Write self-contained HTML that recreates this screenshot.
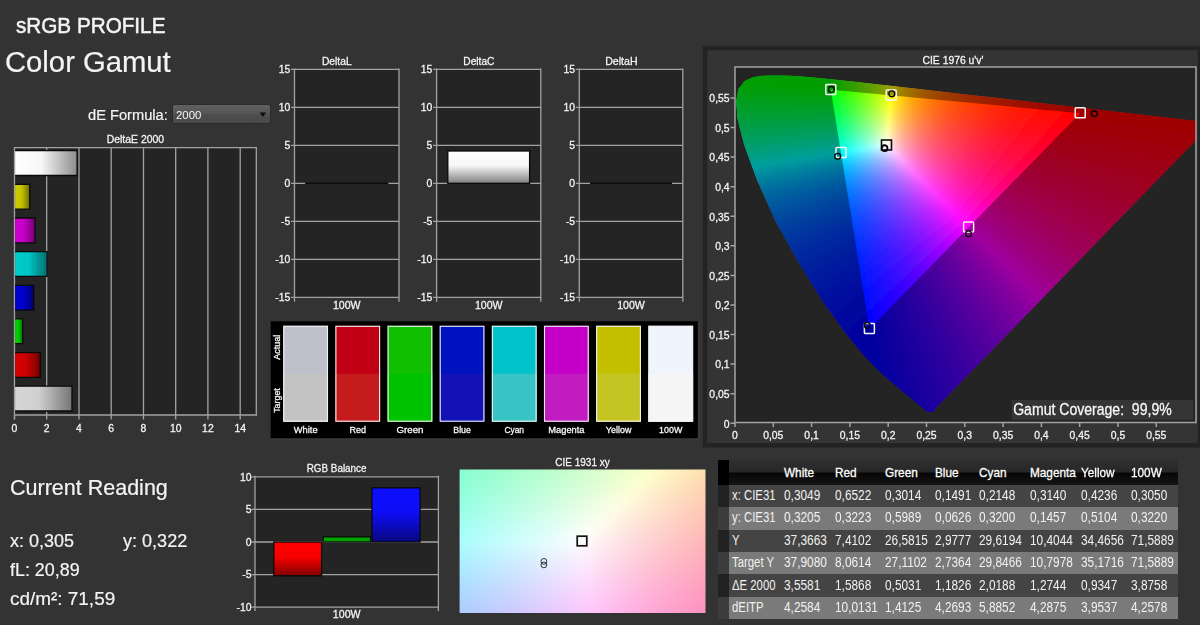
<!DOCTYPE html>
<html lang="en"><head><meta charset="utf-8"><title>sRGB PROFILE - Color Gamut</title>
<style>
*{box-sizing:border-box}
html,body{margin:0;padding:0;background:#333}
body{width:1200px;height:625px;overflow:hidden;position:relative;color:#f4f4f4;font-family:"Liberation Sans",sans-serif}
section,header{position:absolute;margin:0}
svg{position:absolute;left:0;top:0;overflow:visible}
svg text{font-family:"Liberation Sans",sans-serif;stroke:#f4f4f4;stroke-width:.28px;opacity:.999}
h1,h2,h3,p,table,.sx{opacity:.999}
.sx{display:inline-block;transform-origin:0 50%;white-space:nowrap}
h1,h2,h3,p{margin:0;font-weight:normal;position:absolute;white-space:nowrap;line-height:1}
#tbl{position:absolute;left:718.4px;top:459.8px;width:459.8px;border-collapse:collapse;table-layout:fixed;font-size:14.2px;color:#f2f2f2}
#tbl td,#tbl th{padding:0;height:22.4px;line-height:22.4px;text-align:left;font-weight:normal;white-space:nowrap;overflow:visible}
#tbl th{height:23.8px;line-height:25px;color:#fff}
#tbl thead tr{background:linear-gradient(#313131,#272727 49%,#070707 51%,#151515)}
#tbl th span{-webkit-text-stroke:.3px #fff}
#tbl th:first-child{background:#000}
#tbl td:first-child{background:rgba(0,0,0,.5)}
#tbl tbody tr:nth-child(odd){background:#454545}
#tbl tbody tr:nth-child(even){background:#7b7b7b}
#tbl .h0{background:linear-gradient(#000,#000 12%,rgba(0,0,0,.55) 40%,rgba(0,0,0,.25))}
#tbl span{display:inline-block;transform:scaleX(.835);transform-origin:0 50%;position:relative;top:-.8px}
#tbl td.l span{transform:scaleX(.80)}
#tbl th span{transform:scaleX(.92);font-size:12.8px;top:.3px}
</style></head><body>
<header style="left:0;top:0;width:280px;height:130px">
<h1 id="t1" style="left:15.6px;top:14.5px;font-size:21.8px;-webkit-text-stroke:.5px #f4f4f4"><span class="sx" style="transform:scaleX(.949)">sRGB PROFILE</span></h1>
<h2 id="t2" style="-webkit-text-stroke:.2px #f4f4f4;left:5.2px;top:45.5px;font-size:30.4px"><span class="sx" style="transform:scaleX(.962)">Color Gamut</span></h2>
</header>
<section style="left:80px;top:100px;width:195px;height:30px">
<p id="t3" style="-webkit-text-stroke:.2px #f4f4f4;left:8.2px;top:7px;font-size:15.5px"><span class="sx" style="transform:scaleX(.945)">dE Formula:</span></p>
<div style="position:absolute;left:92.8px;top:5.2px;width:96.8px;height:17.6px;border-radius:1.5px;background:linear-gradient(#616161,#565656 45%,#4d4d4d 55%,#494949);box-shadow:0 0 0 1px #2c2c2c"><span class="sx" id="t4" style="position:absolute;left:3.2px;top:4.8px;font-size:11.8px;line-height:1;transform:scaleX(.97)">2000</span><svg width="97" height="18"><path d="M86.6 7.6h6.6l-3.3 4.2z" fill="#0a0a0a"/></svg></div>
</section>
<svg width="0" height="0" style="position:absolute"><defs>
<linearGradient id="hw100" x1="0" x2="1" y1="0" y2="0"><stop offset="0" stop-color="rgb(255,255,255)"/><stop offset=".42" stop-color="rgb(247,247,247)"/><stop offset="1" stop-color="rgb(140,140,140)"/></linearGradient>
<linearGradient id="hyel" x1="0" x2="1" y1="0" y2="0"><stop offset="0" stop-color="rgb(204,204,0)"/><stop offset=".42" stop-color="rgb(197,197,0)"/><stop offset="1" stop-color="rgb(112,112,0)"/></linearGradient>
<linearGradient id="hmag" x1="0" x2="1" y1="0" y2="0"><stop offset="0" stop-color="rgb(204,0,204)"/><stop offset=".42" stop-color="rgb(197,0,197)"/><stop offset="1" stop-color="rgb(112,0,112)"/></linearGradient>
<linearGradient id="hcya" x1="0" x2="1" y1="0" y2="0"><stop offset="0" stop-color="rgb(0,204,204)"/><stop offset=".42" stop-color="rgb(0,197,197)"/><stop offset="1" stop-color="rgb(0,112,112)"/></linearGradient>
<linearGradient id="hblu" x1="0" x2="1" y1="0" y2="0"><stop offset="0" stop-color="rgb(0,0,210)"/><stop offset=".42" stop-color="rgb(0,0,203)"/><stop offset="1" stop-color="rgb(0,0,115)"/></linearGradient>
<linearGradient id="hgrn" x1="0" x2="1" y1="0" y2="0"><stop offset="0" stop-color="rgb(0,210,0)"/><stop offset=".42" stop-color="rgb(0,203,0)"/><stop offset="1" stop-color="rgb(0,115,0)"/></linearGradient>
<linearGradient id="hred" x1="0" x2="1" y1="0" y2="0"><stop offset="0" stop-color="rgb(214,0,0)"/><stop offset=".42" stop-color="rgb(207,0,0)"/><stop offset="1" stop-color="rgb(117,0,0)"/></linearGradient>
<linearGradient id="hwht" x1="0" x2="1" y1="0" y2="0"><stop offset="0" stop-color="rgb(214,214,214)"/><stop offset=".42" stop-color="rgb(207,207,207)"/><stop offset="1" stop-color="rgb(117,117,117)"/></linearGradient>
<linearGradient id="vw" x1="0" x2="0" y1="0" y2="1"><stop offset="0" stop-color="rgb(255,255,255)"/><stop offset=".45" stop-color="rgb(247,247,247)"/><stop offset="1" stop-color="rgb(127,127,127)"/></linearGradient>
<linearGradient id="vr" x1="0" x2="0" y1="0" y2="1"><stop offset="0" stop-color="rgb(255,0,0)"/><stop offset=".45" stop-color="rgb(247,0,0)"/><stop offset="1" stop-color="rgb(127,0,0)"/></linearGradient>
<linearGradient id="vg" x1="0" x2="0" y1="0" y2="1"><stop offset="0" stop-color="rgb(0,200,0)"/><stop offset=".45" stop-color="rgb(0,194,0)"/><stop offset="1" stop-color="rgb(0,100,0)"/></linearGradient>
<linearGradient id="vb" x1="0" x2="0" y1="0" y2="1"><stop offset="0" stop-color="rgb(14,14,255)"/><stop offset=".45" stop-color="rgb(13,13,247)"/><stop offset="1" stop-color="rgb(7,7,127)"/></linearGradient>
</defs></svg>
<section style="left:0px;top:130px;width:270px;height:315px">
<svg width="270" height="315" viewBox="0 130 270 315">
<rect x="14.5" y="147.7" width="241.8" height="267.3" fill="#242424"/>
<path d="M46.7 147.7V415.0M79.0 147.7V415.0M111.2 147.7V415.0M143.5 147.7V415.0M175.7 147.7V415.0M207.9 147.7V415.0M240.2 147.7V415.0" stroke="#a2a2a2" stroke-width="1.3" fill="none"/>
<path d="M14.5 419.5V147.7H256.3V415.0M13.8 415.0H257.0" stroke="#a2a2a2" stroke-width="1.3" fill="none"/>
<path d="M14.5 415.0v4.5M46.7 415.0v4.5M79.0 415.0v4.5M111.2 415.0v4.5M143.5 415.0v4.5M175.7 415.0v4.5M207.9 415.0v4.5M240.2 415.0v4.5" stroke="#a2a2a2" stroke-width="1.3" fill="none"/>
<rect x="15.1" y="150.7" width="62.0" height="24.8" fill="url(#hw100)"/><path d="M15.1 150.7H77.1v24.8H15.1" fill="none" stroke="#0a0a0a" stroke-width="1.3"/>
<rect x="15.1" y="184.3" width="14.6" height="24.8" fill="url(#hyel)"/><path d="M15.1 184.3H29.7v24.8H15.1" fill="none" stroke="#0a0a0a" stroke-width="1.3"/>
<rect x="15.1" y="218.0" width="20.0" height="24.8" fill="url(#hmag)"/><path d="M15.1 218.0H35.1v24.8H15.1" fill="none" stroke="#0a0a0a" stroke-width="1.3"/>
<rect x="15.1" y="251.6" width="32.0" height="24.8" fill="url(#hcya)"/><path d="M15.1 251.6H47.1v24.8H15.1" fill="none" stroke="#0a0a0a" stroke-width="1.3"/>
<rect x="15.1" y="285.3" width="18.6" height="24.8" fill="url(#hblu)"/><path d="M15.1 285.3H33.7v24.8H15.1" fill="none" stroke="#0a0a0a" stroke-width="1.3"/>
<rect x="15.1" y="318.9" width="7.6" height="24.8" fill="url(#hgrn)"/><path d="M15.1 318.9H22.7v24.8H15.1" fill="none" stroke="#0a0a0a" stroke-width="1.3"/>
<rect x="15.1" y="352.6" width="25.1" height="24.8" fill="url(#hred)"/><path d="M15.1 352.6H40.2v24.8H15.1" fill="none" stroke="#0a0a0a" stroke-width="1.3"/>
<rect x="15.1" y="386.2" width="56.9" height="24.8" fill="url(#hwht)"/><path d="M15.1 386.2H72.0v24.8H15.1" fill="none" stroke="#0a0a0a" stroke-width="1.3"/>
<g font-size="10.8">
<text x="14.5" y="431.8" font-size="10.4" text-anchor="middle" fill="#f4f4f4">0</text>
<text x="46.7" y="431.8" font-size="10.4" text-anchor="middle" fill="#f4f4f4">2</text>
<text x="79.0" y="431.8" font-size="10.4" text-anchor="middle" fill="#f4f4f4">4</text>
<text x="111.2" y="431.8" font-size="10.4" text-anchor="middle" fill="#f4f4f4">6</text>
<text x="143.5" y="431.8" font-size="10.4" text-anchor="middle" fill="#f4f4f4">8</text>
<text x="175.7" y="431.8" font-size="10.4" text-anchor="middle" fill="#f4f4f4">10</text>
<text x="207.9" y="431.8" font-size="10.4" text-anchor="middle" fill="#f4f4f4">12</text>
<text x="240.2" y="431.8" font-size="10.4" text-anchor="middle" fill="#f4f4f4">14</text>
</g>
<text x="135.4" y="143.3" font-size="10.8" text-anchor="middle" fill="#f4f4f4" textLength="57.5" lengthAdjust="spacingAndGlyphs">DeltaE 2000</text>
</svg></section>
<section style="left:268px;top:52px;width:138px;height:262px">
<svg width="138" height="262" viewBox="268 52 138 262">
<rect x="294.5" y="69.3" width="104.5" height="228.0" fill="#242424"/>
<path d="M291.0 107.3H399.0M291.0 145.3H399.0M291.0 221.3H399.0M291.0 259.3H399.0M291.0 183.3H305.3M388.2 183.3H399.0M291.0 69.3H399.0M291.0 297.3H399.0" stroke="#a2a2a2" stroke-width="1.3" fill="none"/>
<path d="M294.5 68.6V301.8M399.0 68.6V301.8" stroke="#a2a2a2" stroke-width="1.3" fill="none"/>
<path d="M305.3 183.3H388.2" stroke="#0c0c0c" stroke-width="1.6"/>
<text x="290.3" y="73.0" font-size="10.4" text-anchor="end" fill="#f4f4f4">15</text>
<text x="290.3" y="111.0" font-size="10.4" text-anchor="end" fill="#f4f4f4">10</text>
<text x="290.3" y="149.0" font-size="10.4" text-anchor="end" fill="#f4f4f4">5</text>
<text x="290.3" y="187.0" font-size="10.4" text-anchor="end" fill="#f4f4f4">0</text>
<text x="290.3" y="225.0" font-size="10.4" text-anchor="end" fill="#f4f4f4">-5</text>
<text x="290.3" y="263.0" font-size="10.4" text-anchor="end" fill="#f4f4f4">-10</text>
<text x="290.3" y="301.0" font-size="10.4" text-anchor="end" fill="#f4f4f4">-15</text>
<text x="346.8" y="308.8" font-size="10.8" text-anchor="middle" fill="#f4f4f4" textLength="27.6" lengthAdjust="spacingAndGlyphs">100W</text>
<text x="336.8" y="64.9" font-size="10.8" text-anchor="middle" fill="#f4f4f4" textLength="29.8" lengthAdjust="spacingAndGlyphs">DeltaL</text>
</svg></section>
<section style="left:410px;top:52px;width:138px;height:262px">
<svg width="138" height="262" viewBox="410 52 138 262">
<rect x="436.6" y="69.3" width="104.2" height="228.0" fill="#242424"/>
<path d="M433.1 107.3H540.8M433.1 145.3H540.8M433.1 221.3H540.8M433.1 259.3H540.8M433.1 183.3H447.40000000000003M530.0 183.3H540.8M433.1 69.3H540.8M433.1 297.3H540.8" stroke="#a2a2a2" stroke-width="1.3" fill="none"/>
<path d="M436.6 68.6V301.8M540.8 68.6V301.8" stroke="#a2a2a2" stroke-width="1.3" fill="none"/>
<rect x="447.8" y="151.0" width="81.8" height="32.3" fill="url(#vw)" stroke="#0a0a0a" stroke-width="1.3"/>
<text x="432.4" y="73.0" font-size="10.4" text-anchor="end" fill="#f4f4f4">15</text>
<text x="432.4" y="111.0" font-size="10.4" text-anchor="end" fill="#f4f4f4">10</text>
<text x="432.4" y="149.0" font-size="10.4" text-anchor="end" fill="#f4f4f4">5</text>
<text x="432.4" y="187.0" font-size="10.4" text-anchor="end" fill="#f4f4f4">0</text>
<text x="432.4" y="225.0" font-size="10.4" text-anchor="end" fill="#f4f4f4">-5</text>
<text x="432.4" y="263.0" font-size="10.4" text-anchor="end" fill="#f4f4f4">-10</text>
<text x="432.4" y="301.0" font-size="10.4" text-anchor="end" fill="#f4f4f4">-15</text>
<text x="488.7" y="308.8" font-size="10.8" text-anchor="middle" fill="#f4f4f4" textLength="27.6" lengthAdjust="spacingAndGlyphs">100W</text>
<text x="478.9" y="64.9" font-size="10.8" text-anchor="middle" fill="#f4f4f4" textLength="31.2" lengthAdjust="spacingAndGlyphs">DeltaC</text>
</svg></section>
<section style="left:553px;top:52px;width:137px;height:262px">
<svg width="137" height="262" viewBox="553 52 137 262">
<rect x="579.3" y="69.3" width="103.5" height="228.0" fill="#242424"/>
<path d="M575.8 107.3H682.8M575.8 145.3H682.8M575.8 221.3H682.8M575.8 259.3H682.8M575.8 183.3H590.0999999999999M672.0 183.3H682.8M575.8 69.3H682.8M575.8 297.3H682.8" stroke="#a2a2a2" stroke-width="1.3" fill="none"/>
<path d="M579.3 68.6V301.8M682.8 68.6V301.8" stroke="#a2a2a2" stroke-width="1.3" fill="none"/>
<path d="M590.0999999999999 183.3H672.0" stroke="#0c0c0c" stroke-width="1.6"/>
<text x="575.1" y="73.0" font-size="10.4" text-anchor="end" fill="#f4f4f4">15</text>
<text x="575.1" y="111.0" font-size="10.4" text-anchor="end" fill="#f4f4f4">10</text>
<text x="575.1" y="149.0" font-size="10.4" text-anchor="end" fill="#f4f4f4">5</text>
<text x="575.1" y="187.0" font-size="10.4" text-anchor="end" fill="#f4f4f4">0</text>
<text x="575.1" y="225.0" font-size="10.4" text-anchor="end" fill="#f4f4f4">-5</text>
<text x="575.1" y="263.0" font-size="10.4" text-anchor="end" fill="#f4f4f4">-10</text>
<text x="575.1" y="301.0" font-size="10.4" text-anchor="end" fill="#f4f4f4">-15</text>
<text x="631.0" y="308.8" font-size="10.8" text-anchor="middle" fill="#f4f4f4" textLength="27.6" lengthAdjust="spacingAndGlyphs">100W</text>
<text x="621.4" y="64.9" font-size="10.8" text-anchor="middle" fill="#f4f4f4" textLength="32.4" lengthAdjust="spacingAndGlyphs">DeltaH</text>
</svg></section>
<section style="left:270px;top:320px;width:432px;height:120px">
<svg width="432" height="120" viewBox="270 320 432 120">
<rect x="272" y="323" width="428" height="117.6" fill="#383838"/>
<rect x="270.7" y="321.3" width="427.1" height="116.9" fill="#000"/>
<rect x="283.3" y="325.8" width="44.7" height="95.9" fill="#bec1cb"/>
<rect x="283.3" y="373.7" width="44.7" height="48" fill="#c3c3c3"/>
<rect x="283.8" y="326.3" width="43.7" height="94.9" fill="none" stroke="#f2f2f2" stroke-width="1.1"/>
<text x="305.7" y="432.6" font-size="9.6" text-anchor="middle" fill="#fff" textLength="23.8" lengthAdjust="spacingAndGlyphs" stroke="#fff" stroke-width=".3">White</text>
<rect x="335.4" y="325.8" width="44.7" height="95.9" fill="#c10016"/>
<rect x="335.4" y="373.7" width="44.7" height="48" fill="#c41c1c"/>
<rect x="335.9" y="326.3" width="43.7" height="94.9" fill="none" stroke="#f2f2f2" stroke-width="1.1"/>
<text x="357.8" y="432.6" font-size="9.6" text-anchor="middle" fill="#fff" textLength="16.5" lengthAdjust="spacingAndGlyphs" stroke="#fff" stroke-width=".3">Red</text>
<rect x="387.6" y="325.8" width="44.7" height="95.9" fill="#10c000"/>
<rect x="387.6" y="373.7" width="44.7" height="48" fill="#00c300"/>
<rect x="388.1" y="326.3" width="43.7" height="94.9" fill="none" stroke="#f2f2f2" stroke-width="1.1"/>
<text x="410.0" y="432.6" font-size="9.6" text-anchor="middle" fill="#fff" textLength="27.0" lengthAdjust="spacingAndGlyphs" stroke="#fff" stroke-width=".3">Green</text>
<rect x="439.8" y="325.8" width="44.7" height="95.9" fill="#0012c0"/>
<rect x="439.8" y="373.7" width="44.7" height="48" fill="#1212b6"/>
<rect x="440.2" y="326.3" width="43.7" height="94.9" fill="none" stroke="#f2f2f2" stroke-width="1.1"/>
<text x="462.1" y="432.6" font-size="9.6" text-anchor="middle" fill="#fff" textLength="17.6" lengthAdjust="spacingAndGlyphs" stroke="#fff" stroke-width=".3">Blue</text>
<rect x="491.9" y="325.8" width="44.7" height="95.9" fill="#00c2ca"/>
<rect x="491.9" y="373.7" width="44.7" height="48" fill="#38c4c4"/>
<rect x="492.4" y="326.3" width="43.7" height="94.9" fill="none" stroke="#f2f2f2" stroke-width="1.1"/>
<text x="514.2" y="432.6" font-size="9.6" text-anchor="middle" fill="#fff" textLength="19.6" lengthAdjust="spacingAndGlyphs" stroke="#fff" stroke-width=".3">Cyan</text>
<rect x="544.0" y="325.8" width="44.7" height="95.9" fill="#c400c8"/>
<rect x="544.0" y="373.7" width="44.7" height="48" fill="#c21cc0"/>
<rect x="544.5" y="326.3" width="43.7" height="94.9" fill="none" stroke="#f2f2f2" stroke-width="1.1"/>
<text x="566.4" y="432.6" font-size="9.6" text-anchor="middle" fill="#fff" textLength="36.2" lengthAdjust="spacingAndGlyphs" stroke="#fff" stroke-width=".3">Magenta</text>
<rect x="596.2" y="325.8" width="44.7" height="95.9" fill="#c4c000"/>
<rect x="596.2" y="373.7" width="44.7" height="48" fill="#c4c422"/>
<rect x="596.7" y="326.3" width="43.7" height="94.9" fill="none" stroke="#f2f2f2" stroke-width="1.1"/>
<text x="618.6" y="432.6" font-size="9.6" text-anchor="middle" fill="#fff" textLength="25.5" lengthAdjust="spacingAndGlyphs" stroke="#fff" stroke-width=".3">Yellow</text>
<rect x="648.4" y="325.8" width="44.7" height="95.9" fill="#eff4fd"/>
<rect x="648.4" y="373.7" width="44.7" height="48" fill="#f5f5f5"/>
<rect x="648.9" y="326.3" width="43.7" height="94.9" fill="none" stroke="#f2f2f2" stroke-width="1.1"/>
<text x="670.7" y="432.6" font-size="9.6" text-anchor="middle" fill="#fff" textLength="23.2" lengthAdjust="spacingAndGlyphs" stroke="#fff" stroke-width=".3">100W</text>
<text transform="translate(280.4 359.7) rotate(-90)" font-size="9.6" fill="#fff" stroke="#fff" stroke-width=".3" textLength="25" lengthAdjust="spacingAndGlyphs">Actual</text>
<text transform="translate(280.4 412.8) rotate(-90)" font-size="9.6" fill="#fff" stroke="#fff" stroke-width=".3" textLength="24.6" lengthAdjust="spacingAndGlyphs">Target</text>
</svg></section>
<section style="left:702px;top:46px;width:498px;height:402px">
<svg width="498" height="402" viewBox="702 46 498 402">
<defs>
<clipPath id="cpPlot"><rect x="735.0" y="67.0" width="461.0" height="355.4"/></clipPath>
<clipPath id="cpLocus"><path d="M923.5 408.8L919.7 405.8L914.8 401.6L908.6 396.4L900.5 389.7L890.7 381.5L878.7 370.7L864.4 356.1L845.4 333.0L822.8 301.4L798.4 262.1L774.9 219.7L756.6 178.9L744.1 144.5L737.6 119.0L736.1 101.2L738.5 89.0L744.4 81.2L752.7 77.3L762.6 75.8L773.4 75.4L784.3 75.6L795.7 76.1L808.0 77.0L821.3 78.2L836.0 79.7L852.3 81.4L870.3 83.4L890.2 85.7L912.1 88.2L936.0 91.0L961.7 93.9L988.9 97.1L1017.0 100.3L1044.1 103.5L1070.5 106.5L1094.4 109.2L1115.5 111.7L1133.5 113.7L1148.6 115.5L1161.3 116.9L1172.3 118.2L1181.6 119.3L1189.2 120.2L1195.0 120.8L1199.5 121.4L1202.9 121.7L1205.1 122.0L1207.0 122.2L1208.4 122.4L1209.9 122.6L1211.2 122.7L1211.9 122.8L1212.3 122.8L1212.5 122.9L935.6 408.3Q931.4 416.1 923.5 408.8Z"/></clipPath>
<filter id="fb" x="-2%" y="-2%" width="104%" height="104%"><feGaussianBlur stdDeviation="1.7 1.6"/></filter>
<linearGradient id="r0" gradientUnits="userSpaceOnUse" x1="749" x2="817" y1="0" y2="0"><stop offset="0" stop-color="#00ff00"/><stop offset=".5" stop-color="#00ff00"/><stop offset="1" stop-color="#00ff00"/></linearGradient>
<linearGradient id="r1" gradientUnits="userSpaceOnUse" x1="742" x2="847" y1="0" y2="0"><stop offset="0" stop-color="#00ff00"/><stop offset=".4133" stop-color="#00ff00"/><stop offset=".8267" stop-color="#00ff00"/><stop offset="1" stop-color="#3cff00"/></linearGradient>
<linearGradient id="r2" gradientUnits="userSpaceOnUse" x1="739" x2="874" y1="0" y2="0"><stop offset="0" stop-color="#00ff00"/><stop offset=".3341" stop-color="#00ff00"/><stop offset=".6689" stop-color="#00ff00"/><stop offset=".7511" stop-color="#24ff00"/><stop offset=".8341" stop-color="#4cff00"/><stop offset=".917" stop-color="#77ff00"/><stop offset="1" stop-color="#a6ff00"/></linearGradient>
<linearGradient id="r3" gradientUnits="userSpaceOnUse" x1="737" x2="901" y1="0" y2="0"><stop offset="0" stop-color="#00ff06"/><stop offset=".1646" stop-color="#00ff00"/><stop offset=".3652" stop-color="#00ff00"/><stop offset=".5652" stop-color="#00ff00"/><stop offset=".661" stop-color="#34ff00"/><stop offset=".7561" stop-color="#6fff00"/><stop offset=".8518" stop-color="#b2ff00"/><stop offset=".8994" stop-color="#d7ff00"/><stop offset=".947" stop-color="#ffff00"/><stop offset=".9738" stop-color="#ffea00"/><stop offset="1" stop-color="#ffd700"/></linearGradient>
<linearGradient id="r4" gradientUnits="userSpaceOnUse" x1="735" x2="927" y1="0" y2="0"><stop offset="0" stop-color="#00ff0d"/><stop offset=".1589" stop-color="#00ff07"/><stop offset=".3177" stop-color="#00ff00"/><stop offset=".4958" stop-color="#00ff00"/><stop offset=".5766" stop-color="#34ff00"/><stop offset=".6568" stop-color="#6fff00"/><stop offset=".7375" stop-color="#b2ff00"/><stop offset=".7776" stop-color="#d7ff00"/><stop offset=".8177" stop-color="#ffff00"/><stop offset=".8406" stop-color="#ffe900"/><stop offset=".8635" stop-color="#ffd600"/><stop offset=".9089" stop-color="#ffb700"/><stop offset=".9547" stop-color="#ff9d00"/><stop offset="1" stop-color="#ff8800"/></linearGradient>
<linearGradient id="r5" gradientUnits="userSpaceOnUse" x1="735" x2="953" y1="0" y2="0"><stop offset="0" stop-color="#00ff13"/><stop offset=".2133" stop-color="#00ff0b"/><stop offset=".4266" stop-color="#00ff00"/><stop offset=".439" stop-color="#00ff00"/><stop offset=".5092" stop-color="#35ff00"/><stop offset=".5789" stop-color="#6fff00"/><stop offset=".6491" stop-color="#b2ff00"/><stop offset=".6839" stop-color="#d7ff00"/><stop offset=".7193" stop-color="#ffff00"/><stop offset=".7541" stop-color="#ffdb00"/><stop offset=".7894" stop-color="#ffbd00"/><stop offset=".8243" stop-color="#ffa500"/><stop offset=".8596" stop-color="#ff9100"/><stop offset=".8945" stop-color="#ff8100"/><stop offset=".9298" stop-color="#ff7200"/><stop offset="1" stop-color="#ff5a00"/></linearGradient>
<linearGradient id="r6" gradientUnits="userSpaceOnUse" x1="735" x2="979" y1="0" y2="0"><stop offset="0" stop-color="#00ff1a"/><stop offset=".1971" stop-color="#00ff13"/><stop offset=".3943" stop-color="#00ff08"/><stop offset=".4533" stop-color="#32ff04"/><stop offset=".5119" stop-color="#69ff00"/><stop offset=".5766" stop-color="#afff00"/><stop offset=".609" stop-color="#d6ff00"/><stop offset=".6414" stop-color="#ffff00"/><stop offset=".6635" stop-color="#ffe400"/><stop offset=".6861" stop-color="#ffcd00"/><stop offset=".7086" stop-color="#ffb900"/><stop offset=".7311" stop-color="#ffa700"/><stop offset=".7758" stop-color="#ff8b00"/><stop offset=".8205" stop-color="#ff7500"/><stop offset=".8656" stop-color="#ff6300"/><stop offset=".9102" stop-color="#ff5400"/><stop offset="1" stop-color="#ff3c00"/></linearGradient>
<linearGradient id="r7" gradientUnits="userSpaceOnUse" x1="735" x2="1005" y1="0" y2="0"><stop offset="0" stop-color="#00ff21"/><stop offset=".1789" stop-color="#00ff1b"/><stop offset=".3581" stop-color="#00ff11"/><stop offset=".4133" stop-color="#35ff0e"/><stop offset=".4681" stop-color="#6fff0a"/><stop offset=".5233" stop-color="#b2ff05"/><stop offset=".5511" stop-color="#d8ff03"/><stop offset=".5785" stop-color="#ffff00"/><stop offset=".5811" stop-color="#fffb00"/><stop offset=".6074" stop-color="#ffd900"/><stop offset=".6333" stop-color="#ffbe00"/><stop offset=".6596" stop-color="#ffa700"/><stop offset=".6859" stop-color="#ff9300"/><stop offset=".7381" stop-color="#ff7500"/><stop offset=".7904" stop-color="#ff5e00"/><stop offset=".843" stop-color="#ff4c00"/><stop offset=".8952" stop-color="#ff3d00"/><stop offset="1" stop-color="#ff2700"/></linearGradient>
<linearGradient id="r8" gradientUnits="userSpaceOnUse" x1="735" x2="1031" y1="0" y2="0"><stop offset="0" stop-color="#00ff28"/><stop offset=".1642" stop-color="#00ff23"/><stop offset=".3284" stop-color="#00ff1b"/><stop offset=".3777" stop-color="#34ff18"/><stop offset=".4274" stop-color="#6fff15"/><stop offset=".477" stop-color="#b2ff11"/><stop offset=".502" stop-color="#d7ff0f"/><stop offset=".5267" stop-color="#ffff0c"/><stop offset=".5405" stop-color="#ffea0a"/><stop offset=".5547" stop-color="#ffd608"/><stop offset=".5824" stop-color="#ffb705"/><stop offset=".6101" stop-color="#ff9e02"/><stop offset=".6382" stop-color="#ff8900"/><stop offset=".6834" stop-color="#ff6e00"/><stop offset=".7284" stop-color="#ff5900"/><stop offset=".7736" stop-color="#ff4900"/><stop offset=".8189" stop-color="#ff3b00"/><stop offset=".9095" stop-color="#ff2700"/><stop offset="1" stop-color="#ff1800"/></linearGradient>
<linearGradient id="r9" gradientUnits="userSpaceOnUse" x1="735" x2="1057" y1="0" y2="0"><stop offset="0" stop-color="#00ff30"/><stop offset=".1516" stop-color="#00ff2b"/><stop offset=".3031" stop-color="#00ff25"/><stop offset=".3481" stop-color="#34ff22"/><stop offset=".3932" stop-color="#6fff20"/><stop offset=".4382" stop-color="#b2ff1c"/><stop offset=".4609" stop-color="#d7ff1b"/><stop offset=".4832" stop-color="#ffff19"/><stop offset=".496" stop-color="#ffea16"/><stop offset=".5087" stop-color="#ffd713"/><stop offset=".5339" stop-color="#ffb70f"/><stop offset=".5593" stop-color="#ff9e0b"/><stop offset=".5845" stop-color="#ff8908"/><stop offset=".6099" stop-color="#ff7705"/><stop offset=".6351" stop-color="#ff6903"/><stop offset=".6857" stop-color="#ff5100"/><stop offset=".7252" stop-color="#ff4300"/><stop offset=".7643" stop-color="#ff3700"/><stop offset=".8429" stop-color="#ff2400"/><stop offset=".9214" stop-color="#ff1600"/><stop offset="1" stop-color="#ff0b00"/></linearGradient>
<linearGradient id="r10" gradientUnits="userSpaceOnUse" x1="735" x2="1083" y1="0" y2="0"><stop offset="0" stop-color="#00ff37"/><stop offset=".1411" stop-color="#00ff33"/><stop offset=".2819" stop-color="#00ff2f"/><stop offset=".323" stop-color="#34ff2d"/><stop offset=".3641" stop-color="#6fff2b"/><stop offset=".4052" stop-color="#b2ff28"/><stop offset=".4259" stop-color="#d7ff27"/><stop offset=".4466" stop-color="#ffff26"/><stop offset=".4638" stop-color="#ffe020"/><stop offset=".4813" stop-color="#ffc61b"/><stop offset=".4989" stop-color="#ffb017"/><stop offset=".5164" stop-color="#ff9d14"/><stop offset=".5514" stop-color="#ff7f0e"/><stop offset=".5865" stop-color="#ff680a"/><stop offset=".6216" stop-color="#ff5607"/><stop offset=".6563" stop-color="#ff4704"/><stop offset=".7264" stop-color="#ff3000"/><stop offset=".7948" stop-color="#ff2000"/><stop offset=".8632" stop-color="#ff1300"/><stop offset="1" stop-color="#ff0200"/></linearGradient>
<linearGradient id="r11" gradientUnits="userSpaceOnUse" x1="735" x2="1109" y1="0" y2="0"><stop offset="0" stop-color="#00ff3e"/><stop offset=".1318" stop-color="#00ff3c"/><stop offset=".2636" stop-color="#00ff39"/><stop offset=".3013" stop-color="#34ff38"/><stop offset=".339" stop-color="#6fff36"/><stop offset=".377" stop-color="#b3ff35"/><stop offset=".3957" stop-color="#d7ff34"/><stop offset=".4147" stop-color="#ffff33"/><stop offset=".4254" stop-color="#ffe92e"/><stop offset=".4364" stop-color="#ffd62a"/><stop offset=".458" stop-color="#ffb623"/><stop offset=".4797" stop-color="#ff9c1d"/><stop offset=".5013" stop-color="#ff8718"/><stop offset=".523" stop-color="#ff7614"/><stop offset=".5447" stop-color="#ff6711"/><stop offset=".588" stop-color="#ff4f0c"/><stop offset=".6313" stop-color="#ff3d08"/><stop offset=".6749" stop-color="#ff2f05"/><stop offset=".7615" stop-color="#ff1a00"/><stop offset=".8497" stop-color="#ff0b00"/><stop offset=".938" stop-color="#ff0000"/><stop offset="1" stop-color="#ff0000"/></linearGradient>
<linearGradient id="r12" gradientUnits="userSpaceOnUse" x1="735" x2="1135" y1="0" y2="0"><stop offset="0" stop-color="#00ff46"/><stop offset=".124" stop-color="#00ff45"/><stop offset=".2478" stop-color="#00ff43"/><stop offset=".2825" stop-color="#34ff43"/><stop offset=".3172" stop-color="#6fff42"/><stop offset=".3522" stop-color="#b2ff41"/><stop offset=".3695" stop-color="#d7ff41"/><stop offset=".387" stop-color="#ffff41"/><stop offset=".3997" stop-color="#ffe339"/><stop offset=".4122" stop-color="#ffcd33"/><stop offset=".425" stop-color="#ffb92e"/><stop offset=".4375" stop-color="#ffa829"/><stop offset=".463" stop-color="#ff8b22"/><stop offset=".4882" stop-color="#ff751c"/><stop offset=".5135" stop-color="#ff6317"/><stop offset=".5387" stop-color="#ff5413"/><stop offset=".5895" stop-color="#ff3c0d"/><stop offset=".64" stop-color="#ff2b09"/><stop offset=".6907" stop-color="#ff1e05"/><stop offset=".7918" stop-color="#ff0b00"/><stop offset=".8698" stop-color="#ff0000"/><stop offset="1" stop-color="#ff0000"/></linearGradient>
<linearGradient id="r13" gradientUnits="userSpaceOnUse" x1="735" x2="1161" y1="0" y2="0"><stop offset="0" stop-color="#00ff4e"/><stop offset=".1169" stop-color="#00ff4e"/><stop offset=".2338" stop-color="#00ff4e"/><stop offset=".266" stop-color="#34ff4e"/><stop offset=".2981" stop-color="#6fff4e"/><stop offset=".3305" stop-color="#b2ff4e"/><stop offset=".3465" stop-color="#d7ff4e"/><stop offset=".3627" stop-color="#ffff4f"/><stop offset=".3768" stop-color="#ffdf45"/><stop offset=".3906" stop-color="#ffc53d"/><stop offset=".4047" stop-color="#ffae36"/><stop offset=".4185" stop-color="#ff9c30"/><stop offset=".4465" stop-color="#ff7e27"/><stop offset=".4744" stop-color="#ff6720"/><stop offset=".5023" stop-color="#ff541a"/><stop offset=".5303" stop-color="#ff4516"/><stop offset=".5862" stop-color="#ff2f0f"/><stop offset=".642" stop-color="#ff1e0a"/><stop offset=".6979" stop-color="#ff1206"/><stop offset=".8096" stop-color="#ff0000"/><stop offset=".8185" stop-color="#ff0000"/><stop offset=".9094" stop-color="#ff0000"/><stop offset="1" stop-color="#ff0000"/></linearGradient>
<linearGradient id="r14" gradientUnits="userSpaceOnUse" x1="735" x2="1187" y1="0" y2="0"><stop offset="0" stop-color="#00ff56"/><stop offset=".1106" stop-color="#00ff57"/><stop offset=".2215" stop-color="#00ff59"/><stop offset=".2513" stop-color="#34ff5a"/><stop offset=".2814" stop-color="#70ff5b"/><stop offset=".3113" stop-color="#b2ff5c"/><stop offset=".3263" stop-color="#d7ff5c"/><stop offset=".3412" stop-color="#ffff5d"/><stop offset=".3542" stop-color="#ffdf52"/><stop offset=".3673" stop-color="#ffc448"/><stop offset=".3801" stop-color="#ffaf41"/><stop offset=".3931" stop-color="#ff9c3a"/><stop offset=".419" stop-color="#ff7e30"/><stop offset=".4451" stop-color="#ff6627"/><stop offset=".471" stop-color="#ff5421"/><stop offset=".4969" stop-color="#ff451c"/><stop offset=".5489" stop-color="#ff2f14"/><stop offset=".6009" stop-color="#ff1e0e"/><stop offset=".6527" stop-color="#ff120a"/><stop offset=".7566" stop-color="#ff0004"/><stop offset=".8423" stop-color="#ff0000"/><stop offset=".921" stop-color="#ff0000"/><stop offset="1" stop-color="#ff0000"/></linearGradient>
<linearGradient id="r15" gradientUnits="userSpaceOnUse" x1="735" x2="1204" y1="0" y2="0"><stop offset="0" stop-color="#00ff5e"/><stop offset=".1072" stop-color="#00ff61"/><stop offset=".2145" stop-color="#00ff65"/><stop offset=".2429" stop-color="#34ff66"/><stop offset=".2714" stop-color="#70ff68"/><stop offset=".2998" stop-color="#b2ff6a"/><stop offset=".3141" stop-color="#d7ff6b"/><stop offset=".3284" stop-color="#ffff6c"/><stop offset=".3405" stop-color="#ffdf5f"/><stop offset=".3529" stop-color="#ffc555"/><stop offset=".3652" stop-color="#ffaf4c"/><stop offset=".3776" stop-color="#ff9c44"/><stop offset=".4023" stop-color="#ff7e38"/><stop offset=".4269" stop-color="#ff672f"/><stop offset=".4516" stop-color="#ff5428"/><stop offset=".4763" stop-color="#ff4522"/><stop offset=".5256" stop-color="#ff2f19"/><stop offset=".5748" stop-color="#ff1e13"/><stop offset=".6243" stop-color="#ff120e"/><stop offset=".723" stop-color="#ff0007"/><stop offset=".8015" stop-color="#ff0003"/><stop offset=".88" stop-color="#ff0000"/><stop offset="1" stop-color="#ff0000"/></linearGradient>
<linearGradient id="r16" gradientUnits="userSpaceOnUse" x1="735" x2="1204" y1="0" y2="0"><stop offset="0" stop-color="#00ff66"/><stop offset=".1077" stop-color="#00ff6a"/><stop offset=".2154" stop-color="#00ff70"/><stop offset=".2435" stop-color="#34ff73"/><stop offset=".2716" stop-color="#70ff75"/><stop offset=".2996" stop-color="#b2ff78"/><stop offset=".3136" stop-color="#d7ff79"/><stop offset=".3277" stop-color="#ffff7b"/><stop offset=".3399" stop-color="#ffdf6d"/><stop offset=".352" stop-color="#ffc461"/><stop offset=".3642" stop-color="#ffae57"/><stop offset=".3763" stop-color="#ff9c4f"/><stop offset=".4006" stop-color="#ff7e42"/><stop offset=".4249" stop-color="#ff6637"/><stop offset=".4493" stop-color="#ff542f"/><stop offset=".4736" stop-color="#ff4529"/><stop offset=".5222" stop-color="#ff2f1f"/><stop offset=".5708" stop-color="#ff1e18"/><stop offset=".6194" stop-color="#ff1212"/><stop offset=".7166" stop-color="#ff000a"/><stop offset=".8324" stop-color="#ff0004"/><stop offset=".948" stop-color="#ff0000"/><stop offset="1" stop-color="#ff0000"/></linearGradient>
<linearGradient id="r17" gradientUnits="userSpaceOnUse" x1="735" x2="1204" y1="0" y2="0"><stop offset="0" stop-color="#00ff6e"/><stop offset=".1083" stop-color="#00ff74"/><stop offset=".2164" stop-color="#00ff7d"/><stop offset=".2441" stop-color="#34ff7f"/><stop offset=".2719" stop-color="#70ff83"/><stop offset=".2994" stop-color="#b2ff86"/><stop offset=".3132" stop-color="#d7ff88"/><stop offset=".3271" stop-color="#ffff8a"/><stop offset=".339" stop-color="#ffdf7b"/><stop offset=".351" stop-color="#ffc56e"/><stop offset=".3631" stop-color="#ffae63"/><stop offset=".3751" stop-color="#ff9c5a"/><stop offset=".3989" stop-color="#ff7e4b"/><stop offset=".4228" stop-color="#ff6740"/><stop offset=".4469" stop-color="#ff5437"/><stop offset=".4708" stop-color="#ff4530"/><stop offset=".5188" stop-color="#ff2f25"/><stop offset=".5667" stop-color="#ff1e1d"/><stop offset=".6145" stop-color="#ff1216"/><stop offset=".7104" stop-color="#ff000e"/><stop offset=".7827" stop-color="#ff0009"/><stop offset=".8552" stop-color="#ff0006"/><stop offset=".9275" stop-color="#ff0003"/><stop offset="1" stop-color="#ff0000"/></linearGradient>
<linearGradient id="r18" gradientUnits="userSpaceOnUse" x1="736" x2="1204" y1="0" y2="0"><stop offset="0" stop-color="#00ff77"/><stop offset=".1079" stop-color="#00ff7e"/><stop offset=".2158" stop-color="#00ff89"/><stop offset=".2432" stop-color="#34ff8d"/><stop offset=".2705" stop-color="#70ff91"/><stop offset=".2976" stop-color="#b2ff95"/><stop offset=".3113" stop-color="#d7ff98"/><stop offset=".325" stop-color="#ffff9a"/><stop offset=".337" stop-color="#ffdf89"/><stop offset=".3487" stop-color="#ffc47b"/><stop offset=".3605" stop-color="#ffaf6f"/><stop offset=".3724" stop-color="#ff9c65"/><stop offset=".3959" stop-color="#ff7e55"/><stop offset=".4197" stop-color="#ff6648"/><stop offset=".4434" stop-color="#ff543f"/><stop offset=".4669" stop-color="#ff4537"/><stop offset=".5143" stop-color="#ff2f2a"/><stop offset=".5615" stop-color="#ff1e22"/><stop offset=".609" stop-color="#ff121b"/><stop offset=".7036" stop-color="#ff0011"/><stop offset=".7776" stop-color="#ff000c"/><stop offset=".8517" stop-color="#ff0008"/><stop offset=".9259" stop-color="#ff0005"/><stop offset="1" stop-color="#ff0002"/></linearGradient>
<linearGradient id="r19" gradientUnits="userSpaceOnUse" x1="737" x2="1204" y1="0" y2="0"><stop offset="0" stop-color="#00ff7f"/><stop offset=".1075" stop-color="#00ff89"/><stop offset=".2152" stop-color="#00ff96"/><stop offset=".2422" stop-color="#34ff9a"/><stop offset=".2692" stop-color="#70ff9f"/><stop offset=".2961" stop-color="#b3ffa5"/><stop offset=".3094" stop-color="#d7ffa8"/><stop offset=".3229" stop-color="#ffffab"/><stop offset=".3347" stop-color="#ffdf98"/><stop offset=".3463" stop-color="#ffc589"/><stop offset=".358" stop-color="#ffae7c"/><stop offset=".3696" stop-color="#ff9c71"/><stop offset=".3931" stop-color="#ff7d5f"/><stop offset=".4165" stop-color="#ff6651"/><stop offset=".4398" stop-color="#ff5447"/><stop offset=".4632" stop-color="#ff453e"/><stop offset=".5099" stop-color="#ff2f31"/><stop offset=".5565" stop-color="#ff1e27"/><stop offset=".6032" stop-color="#ff121f"/><stop offset=".6966" stop-color="#ff0015"/><stop offset=".7724" stop-color="#ff000f"/><stop offset=".8484" stop-color="#ff000b"/><stop offset=".9242" stop-color="#ff0007"/><stop offset="1" stop-color="#ff0004"/></linearGradient>
<linearGradient id="r20" gradientUnits="userSpaceOnUse" x1="737" x2="1204" y1="0" y2="0"><stop offset="0" stop-color="#00ff88"/><stop offset=".1081" stop-color="#00ff93"/><stop offset=".2163" stop-color="#00ffa3"/><stop offset=".2428" stop-color="#35ffa8"/><stop offset=".2694" stop-color="#70ffae"/><stop offset=".2959" stop-color="#b3ffb5"/><stop offset=".3092" stop-color="#d8ffb8"/><stop offset=".3225" stop-color="#ffffbc"/><stop offset=".3338" stop-color="#ffdfa8"/><stop offset=".3454" stop-color="#ffc597"/><stop offset=".357" stop-color="#ffae88"/><stop offset=".3683" stop-color="#ff9c7d"/><stop offset=".3914" stop-color="#ff7e69"/><stop offset=".4143" stop-color="#ff675b"/><stop offset=".4375" stop-color="#ff544f"/><stop offset=".4604" stop-color="#ff4545"/><stop offset=".5064" stop-color="#ff2f37"/><stop offset=".5525" stop-color="#ff1e2c"/><stop offset=".5983" stop-color="#ff1224"/><stop offset=".6904" stop-color="#ff0019"/><stop offset=".7677" stop-color="#ff0012"/><stop offset=".8452" stop-color="#ff000d"/><stop offset=".9225" stop-color="#ff0009"/><stop offset="1" stop-color="#ff0006"/></linearGradient>
<linearGradient id="r21" gradientUnits="userSpaceOnUse" x1="738" x2="1204" y1="0" y2="0"><stop offset="0" stop-color="#00ff91"/><stop offset=".1077" stop-color="#00ff9e"/><stop offset=".2157" stop-color="#00ffb1"/><stop offset=".2418" stop-color="#35ffb7"/><stop offset=".268" stop-color="#70ffbe"/><stop offset=".2942" stop-color="#b2ffc5"/><stop offset=".3073" stop-color="#d7ffc9"/><stop offset=".3204" stop-color="#ffffce"/><stop offset=".3318" stop-color="#ffdfb7"/><stop offset=".3431" stop-color="#ffc4a5"/><stop offset=".3543" stop-color="#ffaf96"/><stop offset=".3657" stop-color="#ff9c89"/><stop offset=".3884" stop-color="#ff7e74"/><stop offset=".4112" stop-color="#ff6664"/><stop offset=".4337" stop-color="#ff5457"/><stop offset=".4564" stop-color="#ff454d"/><stop offset=".5019" stop-color="#ff2f3d"/><stop offset=".5472" stop-color="#ff1e32"/><stop offset=".5927" stop-color="#ff1229"/><stop offset=".6835" stop-color="#ff001d"/><stop offset=".7624" stop-color="#ff0015"/><stop offset=".8416" stop-color="#ff0010"/><stop offset=".9208" stop-color="#ff000c"/><stop offset="1" stop-color="#ff0008"/></linearGradient>
<linearGradient id="r22" gradientUnits="userSpaceOnUse" x1="739" x2="1202" y1="0" y2="0"><stop offset="0" stop-color="#00ff9b"/><stop offset=".108" stop-color="#00ffa9"/><stop offset=".2158" stop-color="#00ffbf"/><stop offset=".2419" stop-color="#35ffc6"/><stop offset=".2678" stop-color="#70ffcd"/><stop offset=".2937" stop-color="#b2ffd6"/><stop offset=".3067" stop-color="#d7ffdb"/><stop offset=".3197" stop-color="#ffffe0"/><stop offset=".3309" stop-color="#ffdfc8"/><stop offset=".3421" stop-color="#ffc5b4"/><stop offset=".3533" stop-color="#ffaea4"/><stop offset=".3646" stop-color="#ff9c96"/><stop offset=".387" stop-color="#ff7e7f"/><stop offset=".4095" stop-color="#ff676e"/><stop offset=".432" stop-color="#ff5460"/><stop offset=".4544" stop-color="#ff4555"/><stop offset=".4996" stop-color="#ff2f44"/><stop offset=".5445" stop-color="#ff1e38"/><stop offset=".5894" stop-color="#ff122e"/><stop offset=".6793" stop-color="#ff0021"/><stop offset=".7594" stop-color="#ff0019"/><stop offset=".8397" stop-color="#ff0013"/><stop offset=".9199" stop-color="#ff000e"/><stop offset="1" stop-color="#ff000a"/></linearGradient>
<linearGradient id="r23" gradientUnits="userSpaceOnUse" x1="740" x2="1199" y1="0" y2="0"><stop offset="0" stop-color="#00ffa4"/><stop offset=".1083" stop-color="#00ffb5"/><stop offset=".1625" stop-color="#00ffc0"/><stop offset=".2166" stop-color="#00ffce"/><stop offset=".2425" stop-color="#35ffd5"/><stop offset=".2682" stop-color="#70ffde"/><stop offset=".2939" stop-color="#b2ffe8"/><stop offset=".3068" stop-color="#d7ffed"/><stop offset=".3196" stop-color="#fffff3"/><stop offset=".3307" stop-color="#ffdfd9"/><stop offset=".342" stop-color="#ffc4c3"/><stop offset=".3532" stop-color="#ffaeb2"/><stop offset=".3643" stop-color="#ff9ca3"/><stop offset=".3865" stop-color="#ff7e8a"/><stop offset=".4089" stop-color="#ff6678"/><stop offset=".4312" stop-color="#ff5469"/><stop offset=".4536" stop-color="#ff455d"/><stop offset=".4983" stop-color="#ff2f4b"/><stop offset=".5427" stop-color="#ff1e3d"/><stop offset=".5874" stop-color="#ff1233"/><stop offset=".6767" stop-color="#ff0025"/><stop offset=".7575" stop-color="#ff001c"/><stop offset=".8383" stop-color="#ff0016"/><stop offset=".9192" stop-color="#ff0011"/><stop offset="1" stop-color="#ff000d"/></linearGradient>
<linearGradient id="r24" gradientUnits="userSpaceOnUse" x1="740" x2="1196" y1="0" y2="0"><stop offset="0" stop-color="#00ffae"/><stop offset=".1096" stop-color="#00ffc1"/><stop offset=".1643" stop-color="#00ffcd"/><stop offset=".2191" stop-color="#00ffdd"/><stop offset=".2412" stop-color="#2dffe4"/><stop offset=".2632" stop-color="#5fffec"/><stop offset=".2851" stop-color="#96fff5"/><stop offset=".3072" stop-color="#d4ffff"/><stop offset=".3237" stop-color="#fff7ff"/><stop offset=".3346" stop-color="#ffd9e5"/><stop offset=".3456" stop-color="#ffbfcf"/><stop offset=".3566" stop-color="#ffaabd"/><stop offset=".3675" stop-color="#ff98ad"/><stop offset=".3895" stop-color="#ff7b94"/><stop offset=".4114" stop-color="#ff6581"/><stop offset=".4333" stop-color="#ff5371"/><stop offset=".4553" stop-color="#ff4465"/><stop offset=".4991" stop-color="#ff2e51"/><stop offset=".543" stop-color="#ff1e43"/><stop offset=".5871" stop-color="#ff1239"/><stop offset=".6748" stop-color="#ff0029"/><stop offset=".7559" stop-color="#ff0020"/><stop offset=".8373" stop-color="#ff0019"/><stop offset=".9186" stop-color="#ff0013"/><stop offset="1" stop-color="#ff000f"/></linearGradient>
<linearGradient id="r25" gradientUnits="userSpaceOnUse" x1="741" x2="1193" y1="0" y2="0"><stop offset="0" stop-color="#00ffb8"/><stop offset=".11" stop-color="#00ffcd"/><stop offset=".165" stop-color="#00ffdb"/><stop offset=".2199" stop-color="#00ffec"/><stop offset=".2438" stop-color="#31fff5"/><stop offset=".2679" stop-color="#69ffff"/><stop offset=".2996" stop-color="#b2f1ff"/><stop offset=".331" stop-color="#ffe2ff"/><stop offset=".3416" stop-color="#ffc8e7"/><stop offset=".3524" stop-color="#ffb1d2"/><stop offset=".3631" stop-color="#ff9fc1"/><stop offset=".3737" stop-color="#ff8fb2"/><stop offset=".3949" stop-color="#ff759a"/><stop offset=".4164" stop-color="#ff6087"/><stop offset=".4376" stop-color="#ff4f77"/><stop offset=".4588" stop-color="#ff426b"/><stop offset=".5015" stop-color="#ff2d57"/><stop offset=".544" stop-color="#ff1d49"/><stop offset=".5867" stop-color="#ff113e"/><stop offset=".6719" stop-color="#ff002e"/><stop offset=".754" stop-color="#ff0023"/><stop offset=".8361" stop-color="#ff001c"/><stop offset=".9179" stop-color="#ff0016"/><stop offset="1" stop-color="#ff0011"/></linearGradient>
<linearGradient id="r26" gradientUnits="userSpaceOnUse" x1="742" x2="1190" y1="0" y2="0"><stop offset="0" stop-color="#00ffc2"/><stop offset=".1103" stop-color="#00ffda"/><stop offset=".1656" stop-color="#00ffe9"/><stop offset=".2208" stop-color="#00fffc"/><stop offset=".2279" stop-color="#0effff"/><stop offset=".2833" stop-color="#82e8ff"/><stop offset=".3107" stop-color="#bfdbff"/><stop offset=".3384" stop-color="#ffcfff"/><stop offset=".3489" stop-color="#ffb8e9"/><stop offset=".3592" stop-color="#ffa5d6"/><stop offset=".3799" stop-color="#ff86b7"/><stop offset=".4004" stop-color="#ff6e9f"/><stop offset=".4212" stop-color="#ff5b8d"/><stop offset=".4417" stop-color="#ff4c7e"/><stop offset=".4625" stop-color="#ff3f71"/><stop offset=".5038" stop-color="#ff2b5d"/><stop offset=".5451" stop-color="#ff1c4e"/><stop offset=".5866" stop-color="#ff1143"/><stop offset=".6692" stop-color="#ff0033"/><stop offset=".7518" stop-color="#ff0027"/><stop offset=".8346" stop-color="#ff001f"/><stop offset=".9172" stop-color="#ff0019"/><stop offset="1" stop-color="#ff0014"/></linearGradient>
<linearGradient id="r27" gradientUnits="userSpaceOnUse" x1="743" x2="1187" y1="0" y2="0"><stop offset="0" stop-color="#00ffcd"/><stop offset=".0935" stop-color="#00ffe2"/><stop offset=".1403" stop-color="#00ffef"/><stop offset=".1872" stop-color="#00ffff"/><stop offset=".2216" stop-color="#00f2ff"/><stop offset=".2527" stop-color="#3ce5ff"/><stop offset=".2838" stop-color="#7ad9ff"/><stop offset=".3149" stop-color="#bbcbff"/><stop offset=".3459" stop-color="#ffbdff"/><stop offset=".3561" stop-color="#ffaaea"/><stop offset=".366" stop-color="#ff99d9"/><stop offset=".386" stop-color="#ff7dbc"/><stop offset=".4061" stop-color="#ff68a5"/><stop offset=".4261" stop-color="#ff5693"/><stop offset=".4462" stop-color="#ff4883"/><stop offset=".4662" stop-color="#ff3c77"/><stop offset=".5063" stop-color="#ff2963"/><stop offset=".5462" stop-color="#ff1b54"/><stop offset=".5863" stop-color="#ff1048"/><stop offset=".6664" stop-color="#ff0037"/><stop offset=".7498" stop-color="#ff002b"/><stop offset=".8331" stop-color="#ff0022"/><stop offset=".9167" stop-color="#ff001b"/><stop offset="1" stop-color="#ff0016"/></linearGradient>
<linearGradient id="r28" gradientUnits="userSpaceOnUse" x1="745" x2="1184" y1="0" y2="0"><stop offset="0" stop-color="#00ffd8"/><stop offset=".072" stop-color="#00ffe9"/><stop offset=".1437" stop-color="#00ffff"/><stop offset=".2207" stop-color="#00e3ff"/><stop offset=".2535" stop-color="#3cd7ff"/><stop offset=".2866" stop-color="#7ac9ff"/><stop offset=".3194" stop-color="#bbbcff"/><stop offset=".3522" stop-color="#ffaeff"/><stop offset=".3718" stop-color="#ff8edb"/><stop offset=".3911" stop-color="#ff75c0"/><stop offset=".4105" stop-color="#ff62aa"/><stop offset=".4298" stop-color="#ff5298"/><stop offset=".4688" stop-color="#ff3a7d"/><stop offset=".5075" stop-color="#ff2869"/><stop offset=".5462" stop-color="#ff1a5a"/><stop offset=".5852" stop-color="#ff104e"/><stop offset=".6626" stop-color="#ff003c"/><stop offset=".7472" stop-color="#ff002f"/><stop offset=".8314" stop-color="#ff0026"/><stop offset=".9157" stop-color="#ff001e"/><stop offset="1" stop-color="#ff0019"/></linearGradient>
<linearGradient id="r29" gradientUnits="userSpaceOnUse" x1="746" x2="1181" y1="0" y2="0"><stop offset="0" stop-color="#00ffe4"/><stop offset=".1014" stop-color="#00ffff"/><stop offset=".2214" stop-color="#00d6ff"/><stop offset=".2561" stop-color="#3cc9ff"/><stop offset=".2908" stop-color="#7abcff"/><stop offset=".3255" stop-color="#bbaeff"/><stop offset=".3602" stop-color="#ff9fff"/><stop offset=".3789" stop-color="#ff83de"/><stop offset=".3975" stop-color="#ff6ec4"/><stop offset=".4163" stop-color="#ff5caf"/><stop offset=".4349" stop-color="#ff4e9e"/><stop offset=".4724" stop-color="#ff3783"/><stop offset=".5099" stop-color="#ff266f"/><stop offset=".5474" stop-color="#ff1960"/><stop offset=".5848" stop-color="#ff0f54"/><stop offset=".6598" stop-color="#ff0042"/><stop offset=".7448" stop-color="#ff0033"/><stop offset=".8299" stop-color="#ff0029"/><stop offset=".9149" stop-color="#ff0021"/><stop offset="1" stop-color="#ff001b"/></linearGradient>
<linearGradient id="r30" gradientUnits="userSpaceOnUse" x1="747" x2="1179" y1="0" y2="0"><stop offset="0" stop-color="#00ffef"/><stop offset=".0581" stop-color="#00ffff"/><stop offset=".14" stop-color="#00e5ff"/><stop offset=".2218" stop-color="#00caff"/><stop offset=".2581" stop-color="#3cbdff"/><stop offset=".2944" stop-color="#7aafff"/><stop offset=".331" stop-color="#bba1ff"/><stop offset=".3674" stop-color="#ff92ff"/><stop offset=".3852" stop-color="#ff7ae1"/><stop offset=".4032" stop-color="#ff66c8"/><stop offset=".4213" stop-color="#ff56b4"/><stop offset=".4394" stop-color="#ff49a3"/><stop offset=".4752" stop-color="#ff3489"/><stop offset=".5113" stop-color="#ff2575"/><stop offset=".5472" stop-color="#ff1866"/><stop offset=".5833" stop-color="#ff0f59"/><stop offset=".6553" stop-color="#ff0047"/><stop offset=".7414" stop-color="#ff0037"/><stop offset=".8275" stop-color="#ff002c"/><stop offset=".9139" stop-color="#ff0024"/><stop offset="1" stop-color="#ff001e"/></linearGradient>
<linearGradient id="r31" gradientUnits="userSpaceOnUse" x1="748" x2="1176" y1="0" y2="0"><stop offset="0" stop-color="#00fffb"/><stop offset=".0143" stop-color="#00ffff"/><stop offset=".1185" stop-color="#00e0ff"/><stop offset=".2227" stop-color="#00beff"/><stop offset=".2607" stop-color="#3cb1ff"/><stop offset=".2991" stop-color="#7aa3ff"/><stop offset=".3371" stop-color="#bb95ff"/><stop offset=".3755" stop-color="#ff85ff"/><stop offset=".3928" stop-color="#ff70e3"/><stop offset=".41" stop-color="#ff5fcc"/><stop offset=".4273" stop-color="#ff51b9"/><stop offset=".4446" stop-color="#ff45a9"/><stop offset=".4792" stop-color="#ff328f"/><stop offset=".5138" stop-color="#ff237b"/><stop offset=".5484" stop-color="#ff176c"/><stop offset=".5829" stop-color="#ff0e5f"/><stop offset=".6521" stop-color="#ff004c"/><stop offset=".7393" stop-color="#ff003c"/><stop offset=".8262" stop-color="#ff0030"/><stop offset=".9131" stop-color="#ff0027"/><stop offset="1" stop-color="#ff0020"/></linearGradient>
<linearGradient id="r32" gradientUnits="userSpaceOnUse" x1="749" x2="1173" y1="0" y2="0"><stop offset="0" stop-color="#00f7ff"/><stop offset=".1118" stop-color="#00d7ff"/><stop offset=".2236" stop-color="#00b4ff"/><stop offset=".2637" stop-color="#3ca6ff"/><stop offset=".3035" stop-color="#7a98ff"/><stop offset=".3436" stop-color="#bb89ff"/><stop offset=".3837" stop-color="#ff7aff"/><stop offset=".4002" stop-color="#ff68e5"/><stop offset=".4167" stop-color="#ff59d0"/><stop offset=".4335" stop-color="#ff4cbd"/><stop offset=".45" stop-color="#ff41ae"/><stop offset=".4833" stop-color="#ff2f95"/><stop offset=".5163" stop-color="#ff2181"/><stop offset=".5495" stop-color="#ff1672"/><stop offset=".5828" stop-color="#ff0e65"/><stop offset=".6491" stop-color="#ff0052"/><stop offset=".7368" stop-color="#ff0040"/><stop offset=".8245" stop-color="#ff0034"/><stop offset=".9123" stop-color="#ff002a"/><stop offset="1" stop-color="#ff0023"/></linearGradient>
<linearGradient id="r33" gradientUnits="userSpaceOnUse" x1="750" x2="1170" y1="0" y2="0"><stop offset="0" stop-color="#00ebff"/><stop offset=".1121" stop-color="#00ccff"/><stop offset=".2245" stop-color="#00aaff"/><stop offset=".2664" stop-color="#3c9cff"/><stop offset=".3083" stop-color="#7a8eff"/><stop offset=".3502" stop-color="#bb7fff"/><stop offset=".3921" stop-color="#ff6fff"/><stop offset=".4079" stop-color="#ff60e7"/><stop offset=".4238" stop-color="#ff52d3"/><stop offset=".4555" stop-color="#ff3db3"/><stop offset=".4874" stop-color="#ff2c9b"/><stop offset=".519" stop-color="#ff2088"/><stop offset=".5507" stop-color="#ff1578"/><stop offset=".5824" stop-color="#ff0d6c"/><stop offset=".646" stop-color="#ff0058"/><stop offset=".7345" stop-color="#ff0045"/><stop offset=".8229" stop-color="#ff0037"/><stop offset=".9114" stop-color="#ff002d"/><stop offset="1" stop-color="#ff0026"/></linearGradient>
<linearGradient id="r34" gradientUnits="userSpaceOnUse" x1="751" x2="1167" y1="0" y2="0"><stop offset="0" stop-color="#00e1ff"/><stop offset=".1127" stop-color="#00c3ff"/><stop offset=".2255" stop-color="#00a1ff"/><stop offset=".2692" stop-color="#3c93ff"/><stop offset=".313" stop-color="#7a85ff"/><stop offset=".357" stop-color="#bb75ff"/><stop offset=".4007" stop-color="#ff66ff"/><stop offset=".4159" stop-color="#ff58e9"/><stop offset=".431" stop-color="#ff4cd6"/><stop offset=".4613" stop-color="#ff39b8"/><stop offset=".4913" stop-color="#ff2aa1"/><stop offset=".5216" stop-color="#ff1e8e"/><stop offset=".5519" stop-color="#ff147f"/><stop offset=".5822" stop-color="#ff0c72"/><stop offset=".6425" stop-color="#ff005e"/><stop offset=".732" stop-color="#ff004a"/><stop offset=".8214" stop-color="#ff003b"/><stop offset=".9106" stop-color="#ff0031"/><stop offset="1" stop-color="#ff0029"/></linearGradient>
<linearGradient id="r35" gradientUnits="userSpaceOnUse" x1="752" x2="1164" y1="0" y2="0"><stop offset="0" stop-color="#00d7ff"/><stop offset=".1131" stop-color="#00b9ff"/><stop offset=".2262" stop-color="#0099ff"/><stop offset=".2721" stop-color="#3c8aff"/><stop offset=".318" stop-color="#7a7cff"/><stop offset=".3636" stop-color="#bb6cff"/><stop offset=".4095" stop-color="#ff5cff"/><stop offset=".4238" stop-color="#ff50eb"/><stop offset=".4381" stop-color="#ff46da"/><stop offset=".467" stop-color="#ff35bd"/><stop offset=".4956" stop-color="#ff27a6"/><stop offset=".5245" stop-color="#ff1c94"/><stop offset=".5532" stop-color="#ff1385"/><stop offset=".5818" stop-color="#ff0c79"/><stop offset=".6393" stop-color="#ff0065"/><stop offset=".7296" stop-color="#ff004f"/><stop offset=".8197" stop-color="#ff003f"/><stop offset=".91" stop-color="#ff0034"/><stop offset="1" stop-color="#ff002b"/></linearGradient>
<linearGradient id="r36" gradientUnits="userSpaceOnUse" x1="753" x2="1161" y1="0" y2="0"><stop offset="0" stop-color="#00ceff"/><stop offset=".1137" stop-color="#00b1ff"/><stop offset=".2272" stop-color="#0091ff"/><stop offset=".275" stop-color="#3c82ff"/><stop offset=".3228" stop-color="#7a74ff"/><stop offset=".3706" stop-color="#bb64ff"/><stop offset=".4184" stop-color="#ff54ff"/><stop offset=".4456" stop-color="#ff40dd"/><stop offset=".4728" stop-color="#ff31c2"/><stop offset=".5" stop-color="#ff25ac"/><stop offset=".5272" stop-color="#ff1b9a"/><stop offset=".5816" stop-color="#ff0b7f"/><stop offset=".636" stop-color="#ff006b"/><stop offset=".727" stop-color="#ff0054"/><stop offset=".8179" stop-color="#ff0044"/><stop offset=".9091" stop-color="#ff0038"/><stop offset="1" stop-color="#ff002e"/></linearGradient>
<linearGradient id="r37" gradientUnits="userSpaceOnUse" x1="755" x2="1158" y1="0" y2="0"><stop offset="0" stop-color="#00c4ff"/><stop offset=".1132" stop-color="#00a8ff"/><stop offset=".2263" stop-color="#0089ff"/><stop offset=".2762" stop-color="#3c7bff"/><stop offset=".3263" stop-color="#7a6cff"/><stop offset=".3762" stop-color="#bb5cff"/><stop offset=".4261" stop-color="#ff4cff"/><stop offset=".4519" stop-color="#ff3bdf"/><stop offset=".4774" stop-color="#ff2dc6"/><stop offset=".5032" stop-color="#ff22b2"/><stop offset=".5288" stop-color="#ff19a1"/><stop offset=".5801" stop-color="#ff0b86"/><stop offset=".6315" stop-color="#ff0072"/><stop offset=".6777" stop-color="#ff0065"/><stop offset=".7238" stop-color="#ff0059"/><stop offset=".8159" stop-color="#ff0048"/><stop offset=".9079" stop-color="#ff003b"/><stop offset="1" stop-color="#ff0031"/></linearGradient>
<linearGradient id="r38" gradientUnits="userSpaceOnUse" x1="756" x2="1155" y1="0" y2="0"><stop offset="0" stop-color="#00bcff"/><stop offset=".1138" stop-color="#00a0ff"/><stop offset=".2273" stop-color="#0082ff"/><stop offset=".2794" stop-color="#3c74ff"/><stop offset=".3313" stop-color="#7a65ff"/><stop offset=".3835" stop-color="#bb55ff"/><stop offset=".4353" stop-color="#ff44ff"/><stop offset=".4594" stop-color="#ff35e2"/><stop offset=".4835" stop-color="#ff2acb"/><stop offset=".5078" stop-color="#ff20b8"/><stop offset=".5318" stop-color="#ff17a7"/><stop offset=".5799" stop-color="#ff0a8d"/><stop offset=".6281" stop-color="#ff007a"/><stop offset=".6747" stop-color="#ff006b"/><stop offset=".7211" stop-color="#ff005f"/><stop offset=".814" stop-color="#ff004c"/><stop offset=".907" stop-color="#ff003f"/><stop offset="1" stop-color="#ff0034"/></linearGradient>
<linearGradient id="r39" gradientUnits="userSpaceOnUse" x1="757" x2="1152" y1="0" y2="0"><stop offset="0" stop-color="#00b4ff"/><stop offset=".1142" stop-color="#0099ff"/><stop offset=".2284" stop-color="#007cff"/><stop offset=".2825" stop-color="#3c6dff"/><stop offset=".3367" stop-color="#7a5eff"/><stop offset=".3906" stop-color="#bb4eff"/><stop offset=".4448" stop-color="#ff3dff"/><stop offset=".4673" stop-color="#ff30e5"/><stop offset=".4899" stop-color="#ff26cf"/><stop offset=".5122" stop-color="#ff1dbd"/><stop offset=".5347" stop-color="#ff16ae"/><stop offset=".5795" stop-color="#ff0995"/><stop offset=".6246" stop-color="#ff0081"/><stop offset=".6714" stop-color="#ff0071"/><stop offset=".7185" stop-color="#ff0064"/><stop offset=".8122" stop-color="#ff0051"/><stop offset=".9061" stop-color="#ff0042"/><stop offset="1" stop-color="#ff0038"/></linearGradient>
<linearGradient id="r40" gradientUnits="userSpaceOnUse" x1="759" x2="1149" y1="0" y2="0"><stop offset="0" stop-color="#00acff"/><stop offset=".1136" stop-color="#0092ff"/><stop offset=".2274" stop-color="#0076ff"/><stop offset=".2838" stop-color="#3c67ff"/><stop offset=".3403" stop-color="#7a57ff"/><stop offset=".3967" stop-color="#bb47ff"/><stop offset=".4531" stop-color="#ff36ff"/><stop offset=".4741" stop-color="#ff2be8"/><stop offset=".4949" stop-color="#ff22d4"/><stop offset=".5364" stop-color="#ff14b4"/><stop offset=".5782" stop-color="#ff099c"/><stop offset=".6197" stop-color="#ff0089"/><stop offset=".6674" stop-color="#ff0078"/><stop offset=".7149" stop-color="#ff006a"/><stop offset=".81" stop-color="#ff0055"/><stop offset=".9049" stop-color="#ff0046"/><stop offset="1" stop-color="#ff003b"/></linearGradient>
<linearGradient id="r41" gradientUnits="userSpaceOnUse" x1="760" x2="1146" y1="0" y2="0"><stop offset="0" stop-color="#00a5ff"/><stop offset=".1142" stop-color="#008bff"/><stop offset=".2285" stop-color="#0070ff"/><stop offset=".287" stop-color="#3c61ff"/><stop offset=".3456" stop-color="#7a51ff"/><stop offset=".4044" stop-color="#bb41ff"/><stop offset=".463" stop-color="#ff30ff"/><stop offset=".4821" stop-color="#ff27ea"/><stop offset=".5013" stop-color="#ff1fd8"/><stop offset=".5396" stop-color="#ff12bb"/><stop offset=".5777" stop-color="#ff08a4"/><stop offset=".6161" stop-color="#ff0092"/><stop offset=".664" stop-color="#ff007f"/><stop offset=".7122" stop-color="#ff0070"/><stop offset=".808" stop-color="#ff005a"/><stop offset=".9041" stop-color="#ff004a"/><stop offset="1" stop-color="#ff003e"/></linearGradient>
<linearGradient id="r42" gradientUnits="userSpaceOnUse" x1="761" x2="1144" y1="0" y2="0"><stop offset="0" stop-color="#009eff"/><stop offset=".1144" stop-color="#0085ff"/><stop offset=".2287" stop-color="#006aff"/><stop offset=".2896" stop-color="#3c5bff"/><stop offset=".3504" stop-color="#7a4bff"/><stop offset=".4112" stop-color="#bb3bff"/><stop offset=".4718" stop-color="#ff2aff"/><stop offset=".5065" stop-color="#ff1cdd"/><stop offset=".5413" stop-color="#ff10c2"/><stop offset=".576" stop-color="#ff07ac"/><stop offset=".6107" stop-color="#ff009a"/><stop offset=".6593" stop-color="#ff0086"/><stop offset=".7081" stop-color="#ff0076"/><stop offset=".8052" stop-color="#ff005f"/><stop offset=".9026" stop-color="#ff004e"/><stop offset="1" stop-color="#ff0041"/></linearGradient>
<linearGradient id="r43" gradientUnits="userSpaceOnUse" x1="763" x2="1141" y1="0" y2="0"><stop offset="0" stop-color="#0097ff"/><stop offset=".114" stop-color="#007fff"/><stop offset=".2278" stop-color="#0065ff"/><stop offset=".291" stop-color="#3c56ff"/><stop offset=".3542" stop-color="#7a46ff"/><stop offset=".4175" stop-color="#bb36ff"/><stop offset=".481" stop-color="#ff24ff"/><stop offset=".5122" stop-color="#ff18e1"/><stop offset=".5434" stop-color="#ff0fc8"/><stop offset=".5743" stop-color="#ff07b4"/><stop offset=".6056" stop-color="#ff00a4"/><stop offset=".655" stop-color="#ff008e"/><stop offset=".7042" stop-color="#ff007d"/><stop offset=".8029" stop-color="#ff0064"/><stop offset=".9013" stop-color="#ff0052"/><stop offset="1" stop-color="#ff0045"/></linearGradient>
<linearGradient id="r44" gradientUnits="userSpaceOnUse" x1="764" x2="1138" y1="0" y2="0"><stop offset="0" stop-color="#0091ff"/><stop offset=".1144" stop-color="#0079ff"/><stop offset=".2289" stop-color="#0060ff"/><stop offset=".2944" stop-color="#3c51ff"/><stop offset=".3602" stop-color="#7a41ff"/><stop offset=".4257" stop-color="#bb30ff"/><stop offset=".4914" stop-color="#ff1fff"/><stop offset=".519" stop-color="#ff15e5"/><stop offset=".5465" stop-color="#ff0dcf"/><stop offset=".5741" stop-color="#ff06bd"/><stop offset=".6016" stop-color="#ff00ad"/><stop offset=".6513" stop-color="#ff0096"/><stop offset=".7013" stop-color="#ff0084"/><stop offset=".7511" stop-color="#ff0075"/><stop offset=".8008" stop-color="#ff0069"/><stop offset=".9005" stop-color="#ff0056"/><stop offset="1" stop-color="#ff0048"/></linearGradient>
<linearGradient id="r45" gradientUnits="userSpaceOnUse" x1="766" x2="1135" y1="0" y2="0"><stop offset="0" stop-color="#008bff"/><stop offset=".1138" stop-color="#0074ff"/><stop offset=".2279" stop-color="#005bff"/><stop offset=".2962" stop-color="#3c4cff"/><stop offset=".3642" stop-color="#7a3cff"/><stop offset=".4325" stop-color="#bb2bff"/><stop offset=".5008" stop-color="#ff1aff"/><stop offset=".5247" stop-color="#ff12e9"/><stop offset=".5485" stop-color="#ff0bd6"/><stop offset=".5965" stop-color="#ff00b7"/><stop offset=".6469" stop-color="#ff009e"/><stop offset=".6973" stop-color="#ff008b"/><stop offset=".7477" stop-color="#ff007b"/><stop offset=".7981" stop-color="#ff006e"/><stop offset=".8992" stop-color="#ff005a"/><stop offset="1" stop-color="#ff004c"/></linearGradient>
<linearGradient id="r46" gradientUnits="userSpaceOnUse" x1="767" x2="1132" y1="0" y2="0"><stop offset="0" stop-color="#0085ff"/><stop offset=".1145" stop-color="#006fff"/><stop offset=".229" stop-color="#0057ff"/><stop offset=".2997" stop-color="#3c47ff"/><stop offset=".3704" stop-color="#7a37ff"/><stop offset=".4411" stop-color="#bb26ff"/><stop offset=".5118" stop-color="#ff15ff"/><stop offset=".5521" stop-color="#ff09dc"/><stop offset=".5921" stop-color="#ff00c2"/><stop offset=".6433" stop-color="#ff00a7"/><stop offset=".6942" stop-color="#ff0092"/><stop offset=".7452" stop-color="#ff0082"/><stop offset=".7962" stop-color="#ff0074"/><stop offset=".8981" stop-color="#ff005f"/><stop offset="1" stop-color="#ff004f"/></linearGradient>
<linearGradient id="r47" gradientUnits="userSpaceOnUse" x1="768" x2="1129" y1="0" y2="0"><stop offset="0" stop-color="#0080ff"/><stop offset=".115" stop-color="#006aff"/><stop offset=".2302" stop-color="#0053ff"/><stop offset=".3033" stop-color="#3c43ff"/><stop offset=".3765" stop-color="#7a33ff"/><stop offset=".4499" stop-color="#bb22ff"/><stop offset=".523" stop-color="#ff10ff"/><stop offset=".5554" stop-color="#ff07e3"/><stop offset=".5878" stop-color="#ff00cd"/><stop offset=".6393" stop-color="#ff00b0"/><stop offset=".6909" stop-color="#ff009a"/><stop offset=".7424" stop-color="#ff0088"/><stop offset=".7939" stop-color="#ff007a"/><stop offset=".897" stop-color="#ff0064"/><stop offset="1" stop-color="#ff0053"/></linearGradient>
<linearGradient id="r48" gradientUnits="userSpaceOnUse" x1="770" x2="1126" y1="0" y2="0"><stop offset="0" stop-color="#007aff"/><stop offset=".1146" stop-color="#0065ff"/><stop offset=".2292" stop-color="#004fff"/><stop offset=".3051" stop-color="#3c3fff"/><stop offset=".3812" stop-color="#7a2fff"/><stop offset=".457" stop-color="#bb1eff"/><stop offset=".5331" stop-color="#ff0cff"/><stop offset=".5576" stop-color="#ff06ea"/><stop offset=".5823" stop-color="#ff00d8"/><stop offset=".6346" stop-color="#ff00ba"/><stop offset=".6868" stop-color="#ff00a2"/><stop offset=".739" stop-color="#ff008f"/><stop offset=".791" stop-color="#ff0080"/><stop offset=".8955" stop-color="#ff0068"/><stop offset="1" stop-color="#ff0057"/></linearGradient>
<linearGradient id="r49" gradientUnits="userSpaceOnUse" x1="771" x2="1123" y1="0" y2="0"><stop offset="0" stop-color="#0075ff"/><stop offset=".1151" stop-color="#0061ff"/><stop offset=".2301" stop-color="#004bff"/><stop offset=".3088" stop-color="#3c3bff"/><stop offset=".3875" stop-color="#7a2bff"/><stop offset=".4662" stop-color="#bb1aff"/><stop offset=".5449" stop-color="#ff08ff"/><stop offset=".5778" stop-color="#ff00e5"/><stop offset=".6304" stop-color="#ff00c4"/><stop offset=".6832" stop-color="#ff00aa"/><stop offset=".7361" stop-color="#ff0096"/><stop offset=".7889" stop-color="#ff0086"/><stop offset=".8943" stop-color="#ff006d"/><stop offset="1" stop-color="#ff005b"/></linearGradient>
<linearGradient id="r50" gradientUnits="userSpaceOnUse" x1="772" x2="1120" y1="0" y2="0"><stop offset="0" stop-color="#0071ff"/><stop offset=".1158" stop-color="#005cff"/><stop offset=".2313" stop-color="#0047ff"/><stop offset=".3126" stop-color="#3c37ff"/><stop offset=".3943" stop-color="#7a27ff"/><stop offset=".4756" stop-color="#bb16ff"/><stop offset=".5569" stop-color="#ff04ff"/><stop offset=".573" stop-color="#ff00f2"/><stop offset=".5997" stop-color="#ff00df"/><stop offset=".6264" stop-color="#ff00ce"/><stop offset=".6799" stop-color="#ff00b3"/><stop offset=".733" stop-color="#ff009e"/><stop offset=".7865" stop-color="#ff008c"/><stop offset=".8934" stop-color="#ff0072"/><stop offset="1" stop-color="#ff005f"/></linearGradient>
<linearGradient id="r51" gradientUnits="userSpaceOnUse" x1="774" x2="1117" y1="0" y2="0"><stop offset="0" stop-color="#006cff"/><stop offset=".1152" stop-color="#0058ff"/><stop offset=".2303" stop-color="#0043ff"/><stop offset=".3146" stop-color="#3c34ff"/><stop offset=".3985" stop-color="#7a23ff"/><stop offset=".4828" stop-color="#bb12ff"/><stop offset=".5671" stop-color="#fe00ff"/><stop offset=".5679" stop-color="#ff00ff"/><stop offset=".595" stop-color="#ff00ea"/><stop offset=".6219" stop-color="#ff00d9"/><stop offset=".6761" stop-color="#ff00bc"/><stop offset=".73" stop-color="#ff00a5"/><stop offset=".784" stop-color="#ff0093"/><stop offset=".8379" stop-color="#ff0084"/><stop offset=".8921" stop-color="#ff0077"/><stop offset="1" stop-color="#ff0063"/></linearGradient>
<linearGradient id="r52" gradientUnits="userSpaceOnUse" x1="776" x2="1114" y1="0" y2="0"><stop offset="0" stop-color="#0067ff"/><stop offset=".1145" stop-color="#0054ff"/><stop offset=".2293" stop-color="#0040ff"/><stop offset=".395" stop-color="#7321ff"/><stop offset=".4778" stop-color="#b111ff"/><stop offset=".5609" stop-color="#f000ff"/><stop offset=".5793" stop-color="#ff00ff"/><stop offset=".6056" stop-color="#ff00ec"/><stop offset=".632" stop-color="#ff00db"/><stop offset=".6846" stop-color="#ff00bf"/><stop offset=".737" stop-color="#ff00a9"/><stop offset=".7896" stop-color="#ff0097"/><stop offset=".895" stop-color="#ff007c"/><stop offset="1" stop-color="#ff0068"/></linearGradient>
<linearGradient id="r53" gradientUnits="userSpaceOnUse" x1="777" x2="1112" y1="0" y2="0"><stop offset="0" stop-color="#0063ff"/><stop offset=".1149" stop-color="#0050ff"/><stop offset=".2299" stop-color="#003dff"/><stop offset=".3919" stop-color="#6d20ff"/><stop offset=".554" stop-color="#e300ff"/><stop offset=".5904" stop-color="#ff00ff"/><stop offset=".6418" stop-color="#ff00dd"/><stop offset=".6928" stop-color="#ff00c2"/><stop offset=".7442" stop-color="#ff00ac"/><stop offset=".7952" stop-color="#ff009b"/><stop offset=".8976" stop-color="#ff0080"/><stop offset="1" stop-color="#ff006c"/></linearGradient>
<linearGradient id="r54" gradientUnits="userSpaceOnUse" x1="779" x2="1109" y1="0" y2="0"><stop offset="0" stop-color="#005eff"/><stop offset=".1142" stop-color="#004dff"/><stop offset=".2288" stop-color="#003aff"/><stop offset=".3882" stop-color="#681eff"/><stop offset=".5476" stop-color="#d700ff"/><stop offset=".6024" stop-color="#ff00ff"/><stop offset=".6521" stop-color="#ff00df"/><stop offset=".7018" stop-color="#ff00c5"/><stop offset=".7515" stop-color="#ff00b0"/><stop offset=".8012" stop-color="#ff009f"/><stop offset=".9006" stop-color="#ff0084"/><stop offset="1" stop-color="#ff0070"/></linearGradient>
<linearGradient id="r55" gradientUnits="userSpaceOnUse" x1="781" x2="1106" y1="0" y2="0"><stop offset="0" stop-color="#005aff"/><stop offset=".1138" stop-color="#0049ff"/><stop offset=".2274" stop-color="#0037ff"/><stop offset=".3843" stop-color="#621cff"/><stop offset=".5409" stop-color="#cb00ff"/><stop offset=".6148" stop-color="#ff00ff"/><stop offset=".6631" stop-color="#ff00e0"/><stop offset=".7111" stop-color="#ff00c8"/><stop offset=".7594" stop-color="#ff00b4"/><stop offset=".8074" stop-color="#ff00a3"/><stop offset=".9037" stop-color="#ff0089"/><stop offset="1" stop-color="#ff0075"/></linearGradient>
<linearGradient id="r56" gradientUnits="userSpaceOnUse" x1="782" x2="1103" y1="0" y2="0"><stop offset="0" stop-color="#0057ff"/><stop offset=".1143" stop-color="#0046ff"/><stop offset=".2287" stop-color="#0034ff"/><stop offset=".3819" stop-color="#5d1bff"/><stop offset=".5352" stop-color="#bf00ff"/><stop offset=".6287" stop-color="#ff00ff"/><stop offset=".6751" stop-color="#ff00e2"/><stop offset=".7215" stop-color="#ff00cb"/><stop offset=".7679" stop-color="#ff00b8"/><stop offset=".8143" stop-color="#ff00a7"/><stop offset=".9072" stop-color="#ff008d"/><stop offset="1" stop-color="#ff007a"/></linearGradient>
<linearGradient id="r57" gradientUnits="userSpaceOnUse" x1="784" x2="1100" y1="0" y2="0"><stop offset="0" stop-color="#0053ff"/><stop offset=".1139" stop-color="#0042ff"/><stop offset=".2275" stop-color="#0031ff"/><stop offset=".3778" stop-color="#5819ff"/><stop offset=".5282" stop-color="#b500ff"/><stop offset=".6421" stop-color="#ff00ff"/><stop offset=".6867" stop-color="#ff00e4"/><stop offset=".7313" stop-color="#ff00ce"/><stop offset=".7763" stop-color="#ff00bb"/><stop offset=".8209" stop-color="#ff00ab"/><stop offset=".9104" stop-color="#ff0092"/><stop offset="1" stop-color="#ff007f"/></linearGradient>
<linearGradient id="r58" gradientUnits="userSpaceOnUse" x1="786" x2="1097" y1="0" y2="0"><stop offset="0" stop-color="#004fff"/><stop offset=".1132" stop-color="#003fff"/><stop offset=".2264" stop-color="#002eff"/><stop offset=".3736" stop-color="#5318ff"/><stop offset=".5209" stop-color="#aa00ff"/><stop offset=".6556" stop-color="#ff00ff"/><stop offset=".6987" stop-color="#ff00e6"/><stop offset=".7415" stop-color="#ff00d1"/><stop offset=".7846" stop-color="#ff00bf"/><stop offset=".8277" stop-color="#ff00b0"/><stop offset=".9138" stop-color="#ff0097"/><stop offset="1" stop-color="#ff0084"/></linearGradient>
<linearGradient id="r59" gradientUnits="userSpaceOnUse" x1="787" x2="1094" y1="0" y2="0"><stop offset="0" stop-color="#004cff"/><stop offset=".1137" stop-color="#003cff"/><stop offset=".2277" stop-color="#002cff"/><stop offset=".3713" stop-color="#4e16ff"/><stop offset=".5147" stop-color="#a000ff"/><stop offset=".6707" stop-color="#ff00ff"/><stop offset=".7117" stop-color="#ff00e8"/><stop offset=".7531" stop-color="#ff00d4"/><stop offset=".8352" stop-color="#ff00b4"/><stop offset=".9176" stop-color="#ff009c"/><stop offset="1" stop-color="#ff0089"/></linearGradient>
<linearGradient id="r60" gradientUnits="userSpaceOnUse" x1="789" x2="1091" y1="0" y2="0"><stop offset="0" stop-color="#0048ff"/><stop offset=".1132" stop-color="#0039ff"/><stop offset=".2265" stop-color="#0029ff"/><stop offset=".3666" stop-color="#4915ff"/><stop offset=".507" stop-color="#9700ff"/><stop offset=".6851" stop-color="#ff00ff"/><stop offset=".7245" stop-color="#ff00e9"/><stop offset=".7639" stop-color="#ff00d6"/><stop offset=".8424" stop-color="#ff00b8"/><stop offset=".9212" stop-color="#ff00a1"/><stop offset="1" stop-color="#ff008e"/></linearGradient>
<linearGradient id="r61" gradientUnits="userSpaceOnUse" x1="791" x2="1088" y1="0" y2="0"><stop offset="0" stop-color="#0044ff"/><stop offset=".1125" stop-color="#0036ff"/><stop offset=".2253" stop-color="#0027ff"/><stop offset=".362" stop-color="#4514ff"/><stop offset=".499" stop-color="#8e00ff"/><stop offset=".7" stop-color="#ff00ff"/><stop offset=".7374" stop-color="#ff00eb"/><stop offset=".7751" stop-color="#ff00d9"/><stop offset=".8498" stop-color="#ff00bd"/><stop offset=".9249" stop-color="#ff00a6"/><stop offset="1" stop-color="#ff0094"/></linearGradient>
<linearGradient id="r62" gradientUnits="userSpaceOnUse" x1="792" x2="1085" y1="0" y2="0"><stop offset="0" stop-color="#0042ff"/><stop offset=".1133" stop-color="#0033ff"/><stop offset=".2263" stop-color="#0025ff"/><stop offset=".3594" stop-color="#4113ff"/><stop offset=".4922" stop-color="#8500ff"/><stop offset=".6044" stop-color="#c100ff"/><stop offset=".7164" stop-color="#ff00ff"/><stop offset=".7874" stop-color="#ff00dc"/><stop offset=".858" stop-color="#ff00c1"/><stop offset=".929" stop-color="#ff00ab"/><stop offset="1" stop-color="#ff0099"/></linearGradient>
<linearGradient id="r63" gradientUnits="userSpaceOnUse" x1="794" x2="1082" y1="0" y2="0"><stop offset="0" stop-color="#003eff"/><stop offset=".1125" stop-color="#0031ff"/><stop offset=".225" stop-color="#0023ff"/><stop offset=".3545" stop-color="#3d12ff"/><stop offset=".4837" stop-color="#7d00ff"/><stop offset=".608" stop-color="#bc00ff"/><stop offset=".7323" stop-color="#ff00ff"/><stop offset=".7993" stop-color="#ff00df"/><stop offset=".866" stop-color="#ff00c5"/><stop offset=".933" stop-color="#ff00b0"/><stop offset="1" stop-color="#ff009f"/></linearGradient>
<linearGradient id="r64" gradientUnits="userSpaceOnUse" x1="796" x2="1080" y1="0" y2="0"><stop offset="0" stop-color="#003bff"/><stop offset=".1116" stop-color="#002eff"/><stop offset=".2229" stop-color="#0020ff"/><stop offset=".3479" stop-color="#3911ff"/><stop offset=".4732" stop-color="#7500ff"/><stop offset=".6095" stop-color="#b800ff"/><stop offset=".7461" stop-color="#ff00ff"/><stop offset=".8095" stop-color="#ff00e1"/><stop offset=".8732" stop-color="#ff00c9"/><stop offset=".9366" stop-color="#ff00b5"/><stop offset="1" stop-color="#ff00a4"/></linearGradient>
<linearGradient id="r65" gradientUnits="userSpaceOnUse" x1="798" x2="1077" y1="0" y2="0"><stop offset="0" stop-color="#0038ff"/><stop offset=".1108" stop-color="#002bff"/><stop offset=".2215" stop-color="#001eff"/><stop offset=".3427" stop-color="#350fff"/><stop offset=".4638" stop-color="#6d00ff"/><stop offset=".6136" stop-color="#b400ff"/><stop offset=".7631" stop-color="#ff00ff"/><stop offset=".8222" stop-color="#ff00e4"/><stop offset=".8817" stop-color="#ff00cd"/><stop offset=".9409" stop-color="#ff00bb"/><stop offset="1" stop-color="#ff00ab"/></linearGradient>
<linearGradient id="r66" gradientUnits="userSpaceOnUse" x1="800" x2="1074" y1="0" y2="0"><stop offset="0" stop-color="#0035ff"/><stop offset=".1099" stop-color="#0029ff"/><stop offset=".2201" stop-color="#001cff"/><stop offset=".3372" stop-color="#320eff"/><stop offset=".4544" stop-color="#6500ff"/><stop offset=".6175" stop-color="#b000ff"/><stop offset=".7807" stop-color="#ff00ff"/><stop offset=".8354" stop-color="#ff00e6"/><stop offset=".8905" stop-color="#ff00d2"/><stop offset=".9453" stop-color="#ff00c0"/><stop offset="1" stop-color="#ff00b1"/></linearGradient>
<linearGradient id="r67" gradientUnits="userSpaceOnUse" x1="801" x2="1071" y1="0" y2="0"><stop offset="0" stop-color="#0033ff"/><stop offset=".2215" stop-color="#001aff"/><stop offset=".3341" stop-color="#2e0dff"/><stop offset=".4467" stop-color="#5e00ff"/><stop offset=".623" stop-color="#ac00ff"/><stop offset=".7996" stop-color="#ff00ff"/><stop offset=".8496" stop-color="#ff00e9"/><stop offset=".9" stop-color="#ff00d6"/><stop offset="1" stop-color="#ff00b8"/></linearGradient>
<linearGradient id="r68" gradientUnits="userSpaceOnUse" x1="803" x2="1068" y1="0" y2="0"><stop offset="0" stop-color="#0030ff"/><stop offset=".2196" stop-color="#0018ff"/><stop offset=".4362" stop-color="#5700ff"/><stop offset=".6275" stop-color="#a900ff"/><stop offset=".8185" stop-color="#ff00ff"/><stop offset=".8638" stop-color="#ff00ec"/><stop offset=".9094" stop-color="#ff00db"/><stop offset="1" stop-color="#ff00bf"/></linearGradient>
<linearGradient id="r69" gradientUnits="userSpaceOnUse" x1="805" x2="1065" y1="0" y2="0"><stop offset="0" stop-color="#002dff"/><stop offset=".2181" stop-color="#0017ff"/><stop offset=".4258" stop-color="#5100ff"/><stop offset=".6319" stop-color="#a500ff"/><stop offset=".8381" stop-color="#ff00ff"/><stop offset=".9192" stop-color="#ff00df"/><stop offset="1" stop-color="#ff00c6"/></linearGradient>
<linearGradient id="r70" gradientUnits="userSpaceOnUse" x1="807" x2="1062" y1="0" y2="0"><stop offset="0" stop-color="#002bff"/><stop offset=".2165" stop-color="#0015ff"/><stop offset=".4149" stop-color="#4a00ff"/><stop offset=".6369" stop-color="#a200ff"/><stop offset=".8584" stop-color="#ff00ff"/><stop offset=".9294" stop-color="#ff00e4"/><stop offset="1" stop-color="#ff00cd"/></linearGradient>
<linearGradient id="r71" gradientUnits="userSpaceOnUse" x1="809" x2="1059" y1="0" y2="0"><stop offset="0" stop-color="#0028ff"/><stop offset=".2148" stop-color="#0013ff"/><stop offset=".4032" stop-color="#4400ff"/><stop offset=".6416" stop-color="#9f00ff"/><stop offset=".88" stop-color="#ff00ff"/><stop offset=".94" stop-color="#ff00e8"/><stop offset="1" stop-color="#ff00d5"/></linearGradient>
<linearGradient id="r72" gradientUnits="userSpaceOnUse" x1="811" x2="1056" y1="0" y2="0"><stop offset="0" stop-color="#0026ff"/><stop offset=".2131" stop-color="#0012ff"/><stop offset=".3914" stop-color="#3e00ff"/><stop offset=".5192" stop-color="#6c00ff"/><stop offset=".6465" stop-color="#9b00ff"/><stop offset=".7743" stop-color="#cc00ff"/><stop offset=".902" stop-color="#ff00ff"/><stop offset="1" stop-color="#ff00dd"/></linearGradient>
<linearGradient id="r73" gradientUnits="userSpaceOnUse" x1="813" x2="1053" y1="0" y2="0"><stop offset="0" stop-color="#0023ff"/><stop offset=".2113" stop-color="#0010ff"/><stop offset=".3792" stop-color="#3800ff"/><stop offset=".5154" stop-color="#6800ff"/><stop offset=".6521" stop-color="#9800ff"/><stop offset=".7883" stop-color="#cb00ff"/><stop offset=".925" stop-color="#ff00ff"/><stop offset="1" stop-color="#ff00e5"/></linearGradient>
<linearGradient id="r74" gradientUnits="userSpaceOnUse" x1="814" x2="1050" y1="0" y2="0"><stop offset="0" stop-color="#0021ff"/><stop offset=".2127" stop-color="#000eff"/><stop offset=".3686" stop-color="#3300ff"/><stop offset=".514" stop-color="#6300ff"/><stop offset=".6589" stop-color="#9500ff"/><stop offset=".8038" stop-color="#c900ff"/><stop offset=".9492" stop-color="#ff00ff"/><stop offset="1" stop-color="#ff00ed"/></linearGradient>
<linearGradient id="r75" gradientUnits="userSpaceOnUse" x1="816" x2="1048" y1="0" y2="0"><stop offset="0" stop-color="#001fff"/><stop offset=".2095" stop-color="#000dff"/><stop offset=".3539" stop-color="#2d00ff"/><stop offset=".5078" stop-color="#5f00ff"/><stop offset=".6616" stop-color="#9200ff"/><stop offset=".8159" stop-color="#c800ff"/><stop offset=".9698" stop-color="#ff00ff"/><stop offset="1" stop-color="#ff00f4"/></linearGradient>
<linearGradient id="r76" gradientUnits="userSpaceOnUse" x1="818" x2="1045" y1="0" y2="0"><stop offset="0" stop-color="#001dff"/><stop offset=".2075" stop-color="#000bff"/><stop offset=".3401" stop-color="#2800ff"/><stop offset=".504" stop-color="#5b00ff"/><stop offset=".6678" stop-color="#9000ff"/><stop offset=".8317" stop-color="#c600ff"/><stop offset=".9956" stop-color="#ff00ff"/><stop offset="1" stop-color="#ff00fe"/></linearGradient>
<linearGradient id="r77" gradientUnits="userSpaceOnUse" x1="820" x2="1042" y1="0" y2="0"><stop offset="0" stop-color="#001aff"/><stop offset=".2054" stop-color="#000aff"/><stop offset=".3252" stop-color="#2300ff"/><stop offset=".4941" stop-color="#5500ff"/><stop offset=".6626" stop-color="#8900ff"/><stop offset=".8315" stop-color="#bf00ff"/><stop offset="1" stop-color="#f700ff"/></linearGradient>
<linearGradient id="r78" gradientUnits="userSpaceOnUse" x1="822" x2="1039" y1="0" y2="0"><stop offset="0" stop-color="#0018ff"/><stop offset=".2032" stop-color="#0009ff"/><stop offset=".3101" stop-color="#1e00ff"/><stop offset=".4825" stop-color="#4f00ff"/><stop offset=".6553" stop-color="#8300ff"/><stop offset=".8276" stop-color="#b800ff"/><stop offset="1" stop-color="#ee00ff"/></linearGradient>
<linearGradient id="r79" gradientUnits="userSpaceOnUse" x1="824" x2="1036" y1="0" y2="0"><stop offset="0" stop-color="#0016ff"/><stop offset=".2009" stop-color="#0007ff"/><stop offset=".2943" stop-color="#1900ff"/><stop offset=".4708" stop-color="#4a00ff"/><stop offset=".6472" stop-color="#7c00ff"/><stop offset=".8236" stop-color="#b000ff"/><stop offset="1" stop-color="#e600ff"/></linearGradient>
<linearGradient id="r80" gradientUnits="userSpaceOnUse" x1="827" x2="1033" y1="0" y2="0"><stop offset="0" stop-color="#0014ff"/><stop offset=".1947" stop-color="#0006ff"/><stop offset=".2738" stop-color="#1400ff"/><stop offset=".4553" stop-color="#4400ff"/><stop offset=".6369" stop-color="#7600ff"/><stop offset=".8184" stop-color="#a900ff"/><stop offset="1" stop-color="#de00ff"/></linearGradient>
<linearGradient id="r81" gradientUnits="userSpaceOnUse" x1="829" x2="1030" y1="0" y2="0"><stop offset="0" stop-color="#0012ff"/><stop offset=".1915" stop-color="#0005ff"/><stop offset=".2562" stop-color="#1000ff"/><stop offset=".4423" stop-color="#3f00ff"/><stop offset=".6284" stop-color="#7000ff"/><stop offset=".8139" stop-color="#a200ff"/><stop offset="1" stop-color="#d500ff"/></linearGradient>
<linearGradient id="r82" gradientUnits="userSpaceOnUse" x1="831" x2="1027" y1="0" y2="0"><stop offset="0" stop-color="#0010ff"/><stop offset=".1888" stop-color="#0003ff"/><stop offset=".2378" stop-color="#0c00ff"/><stop offset=".4281" stop-color="#3a00ff"/><stop offset=".6189" stop-color="#6a00ff"/><stop offset=".8092" stop-color="#9b00ff"/><stop offset="1" stop-color="#ce00ff"/></linearGradient>
<linearGradient id="r83" gradientUnits="userSpaceOnUse" x1="833" x2="1024" y1="0" y2="0"><stop offset="0" stop-color="#000eff"/><stop offset=".1859" stop-color="#0002ff"/><stop offset=".2178" stop-color="#0700ff"/><stop offset=".4136" stop-color="#3500ff"/><stop offset=".6089" stop-color="#6400ff"/><stop offset=".8047" stop-color="#9400ff"/><stop offset="1" stop-color="#c600ff"/></linearGradient>
<linearGradient id="r84" gradientUnits="userSpaceOnUse" x1="835" x2="1021" y1="0" y2="0"><stop offset="0" stop-color="#000cff"/><stop offset=".1828" stop-color="#0001ff"/><stop offset=".1973" stop-color="#0300ff"/><stop offset=".3978" stop-color="#3000ff"/><stop offset=".5989" stop-color="#5e00ff"/><stop offset=".7995" stop-color="#8e00ff"/><stop offset="1" stop-color="#bf00ff"/></linearGradient>
<linearGradient id="r85" gradientUnits="userSpaceOnUse" x1="837" x2="1018" y1="0" y2="0"><stop offset="0" stop-color="#000bff"/><stop offset=".1757" stop-color="#0000ff"/><stop offset=".1796" stop-color="#0000ff"/><stop offset=".3845" stop-color="#2c00ff"/><stop offset=".5895" stop-color="#5900ff"/><stop offset=".795" stop-color="#8800ff"/><stop offset="1" stop-color="#b800ff"/></linearGradient>
<linearGradient id="r86" gradientUnits="userSpaceOnUse" x1="839" x2="1015" y1="0" y2="0"><stop offset="0" stop-color="#0009ff"/><stop offset=".1528" stop-color="#0000ff"/><stop offset=".1761" stop-color="#0000ff"/><stop offset=".3818" stop-color="#2a00ff"/><stop offset=".5881" stop-color="#5600ff"/><stop offset=".7938" stop-color="#8300ff"/><stop offset="1" stop-color="#b100ff"/></linearGradient>
<linearGradient id="r87" gradientUnits="userSpaceOnUse" x1="842" x2="1013" y1="0" y2="0"><stop offset="0" stop-color="#0007ff"/><stop offset=".1222" stop-color="#0000ff"/><stop offset=".1667" stop-color="#0000ff"/><stop offset=".3749" stop-color="#2900ff"/><stop offset=".583" stop-color="#5300ff"/><stop offset=".7918" stop-color="#7f00ff"/><stop offset="1" stop-color="#ab00ff"/></linearGradient>
<linearGradient id="r88" gradientUnits="userSpaceOnUse" x1="844" x2="1010" y1="0" y2="0"><stop offset="0" stop-color="#0005ff"/><stop offset=".0964" stop-color="#0000ff"/><stop offset=".162" stop-color="#0000ff"/><stop offset=".3717" stop-color="#2800ff"/><stop offset=".5813" stop-color="#5000ff"/><stop offset=".7904" stop-color="#7a00ff"/><stop offset="1" stop-color="#a500ff"/></linearGradient>
<linearGradient id="r89" gradientUnits="userSpaceOnUse" x1="846" x2="1007" y1="0" y2="0"><stop offset="0" stop-color="#0004ff"/><stop offset=".0689" stop-color="#0000ff"/><stop offset=".1578" stop-color="#0000ff"/><stop offset=".3683" stop-color="#2600ff"/><stop offset=".5789" stop-color="#4d00ff"/><stop offset=".7894" stop-color="#7500ff"/><stop offset="1" stop-color="#9e00ff"/></linearGradient>
<linearGradient id="r90" gradientUnits="userSpaceOnUse" x1="849" x2="1004" y1="0" y2="0"><stop offset="0" stop-color="#0002ff"/><stop offset=".0329" stop-color="#0000ff"/><stop offset=".1477" stop-color="#0000ff"/><stop offset=".3606" stop-color="#2500ff"/><stop offset=".5742" stop-color="#4a00ff"/><stop offset=".7871" stop-color="#7100ff"/><stop offset="1" stop-color="#9800ff"/></linearGradient>
<linearGradient id="r91" gradientUnits="userSpaceOnUse" x1="851" x2="1001" y1="0" y2="0"><stop offset="0" stop-color="#0000ff"/><stop offset=".1427" stop-color="#0000ff"/><stop offset=".3567" stop-color="#2300ff"/><stop offset=".5713" stop-color="#4700ff"/><stop offset=".7853" stop-color="#6c00ff"/><stop offset="1" stop-color="#9200ff"/></linearGradient>
<linearGradient id="r92" gradientUnits="userSpaceOnUse" x1="854" x2="998" y1="0" y2="0"><stop offset="0" stop-color="#0000ff"/><stop offset=".1312" stop-color="#0000ff"/><stop offset=".3486" stop-color="#2200ff"/><stop offset=".5653" stop-color="#4400ff"/><stop offset=".7826" stop-color="#6800ff"/><stop offset="1" stop-color="#8c00ff"/></linearGradient>
<linearGradient id="r93" gradientUnits="userSpaceOnUse" x1="856" x2="995" y1="0" y2="0"><stop offset="0" stop-color="#0000ff"/><stop offset=".1252" stop-color="#0000ff"/><stop offset=".3439" stop-color="#2100ff"/><stop offset=".5626" stop-color="#4200ff"/><stop offset=".7813" stop-color="#6400ff"/><stop offset="1" stop-color="#8700ff"/></linearGradient>
<linearGradient id="r94" gradientUnits="userSpaceOnUse" x1="859" x2="992" y1="0" y2="0"><stop offset="0" stop-color="#0000ff"/><stop offset=".1113" stop-color="#0000ff"/><stop offset=".5556" stop-color="#3f00ff"/><stop offset="1" stop-color="#8100ff"/></linearGradient>
<linearGradient id="r95" gradientUnits="userSpaceOnUse" x1="861" x2="989" y1="0" y2="0"><stop offset="0" stop-color="#0000ff"/><stop offset=".1039" stop-color="#0000ff"/><stop offset=".5523" stop-color="#3d00ff"/><stop offset="1" stop-color="#7c00ff"/></linearGradient>
<linearGradient id="r96" gradientUnits="userSpaceOnUse" x1="864" x2="986" y1="0" y2="0"><stop offset="0" stop-color="#0000ff"/><stop offset=".0885" stop-color="#0000ff"/><stop offset=".5443" stop-color="#3a00ff"/><stop offset="1" stop-color="#7600ff"/></linearGradient>
<linearGradient id="r97" gradientUnits="userSpaceOnUse" x1="867" x2="983" y1="0" y2="0"><stop offset="0" stop-color="#0000ff"/><stop offset=".0716" stop-color="#0000ff"/><stop offset=".5362" stop-color="#3800ff"/><stop offset="1" stop-color="#7100ff"/></linearGradient>
<linearGradient id="r98" gradientUnits="userSpaceOnUse" x1="870" x2="981" y1="0" y2="0"><stop offset="0" stop-color="#0000ff"/><stop offset=".0523" stop-color="#0000ff"/><stop offset=".5261" stop-color="#3600ff"/><stop offset="1" stop-color="#6d00ff"/></linearGradient>
<linearGradient id="r99" gradientUnits="userSpaceOnUse" x1="873" x2="978" y1="0" y2="0"><stop offset="0" stop-color="#0000ff"/><stop offset=".0314" stop-color="#0000ff"/><stop offset=".5152" stop-color="#3300ff"/><stop offset="1" stop-color="#6800ff"/></linearGradient>
<linearGradient id="r100" gradientUnits="userSpaceOnUse" x1="876" x2="975" y1="0" y2="0"><stop offset="0" stop-color="#0000ff"/><stop offset=".5" stop-color="#3100ff"/><stop offset="1" stop-color="#6400ff"/></linearGradient>
<linearGradient id="r101" gradientUnits="userSpaceOnUse" x1="879" x2="972" y1="0" y2="0"><stop offset="0" stop-color="#0200ff"/><stop offset=".5" stop-color="#3000ff"/><stop offset="1" stop-color="#5f00ff"/></linearGradient>
<linearGradient id="r102" gradientUnits="userSpaceOnUse" x1="883" x2="969" y1="0" y2="0"><stop offset="0" stop-color="#0500ff"/><stop offset=".5" stop-color="#2f00ff"/><stop offset="1" stop-color="#5a00ff"/></linearGradient>
<linearGradient id="r103" gradientUnits="userSpaceOnUse" x1="886" x2="966" y1="0" y2="0"><stop offset="0" stop-color="#0700ff"/><stop offset=".5" stop-color="#2e00ff"/><stop offset="1" stop-color="#5600ff"/></linearGradient>
<linearGradient id="r104" gradientUnits="userSpaceOnUse" x1="890" x2="963" y1="0" y2="0"><stop offset="0" stop-color="#0b00ff"/><stop offset=".5" stop-color="#2e00ff"/><stop offset="1" stop-color="#5100ff"/></linearGradient>
<linearGradient id="r105" gradientUnits="userSpaceOnUse" x1="893" x2="960" y1="0" y2="0"><stop offset="0" stop-color="#0d00ff"/><stop offset=".5" stop-color="#2d00ff"/><stop offset="1" stop-color="#4d00ff"/></linearGradient>
<linearGradient id="r106" gradientUnits="userSpaceOnUse" x1="897" x2="957" y1="0" y2="0"><stop offset="0" stop-color="#1000ff"/><stop offset="1" stop-color="#4900ff"/></linearGradient>
<linearGradient id="r107" gradientUnits="userSpaceOnUse" x1="900" x2="954" y1="0" y2="0"><stop offset="0" stop-color="#1200ff"/><stop offset="1" stop-color="#4500ff"/></linearGradient>
<linearGradient id="r108" gradientUnits="userSpaceOnUse" x1="904" x2="951" y1="0" y2="0"><stop offset="0" stop-color="#1500ff"/><stop offset="1" stop-color="#4100ff"/></linearGradient>
<linearGradient id="r109" gradientUnits="userSpaceOnUse" x1="908" x2="949" y1="0" y2="0"><stop offset="0" stop-color="#1800ff"/><stop offset="1" stop-color="#3e00ff"/></linearGradient>
<linearGradient id="r110" gradientUnits="userSpaceOnUse" x1="911" x2="946" y1="0" y2="0"><stop offset="0" stop-color="#1a00ff"/><stop offset="1" stop-color="#3a00ff"/></linearGradient>
<linearGradient id="r111" gradientUnits="userSpaceOnUse" x1="915" x2="943" y1="0" y2="0"><stop offset="0" stop-color="#1d00ff"/><stop offset="1" stop-color="#3600ff"/></linearGradient>
<linearGradient id="r112" gradientUnits="userSpaceOnUse" x1="918" x2="940" y1="0" y2="0"><stop offset="0" stop-color="#1f00ff"/><stop offset="1" stop-color="#3300ff"/></linearGradient>
<linearGradient id="r113" gradientUnits="userSpaceOnUse" x1="922" x2="937" y1="0" y2="0"><stop offset="0" stop-color="#2200ff"/><stop offset="1" stop-color="#2f00ff"/></linearGradient>
</defs>
<rect x="702.8" y="46.3" width="500" height="401.2" fill="#232323"/>
<rect x="707.2" y="50.2" width="490.6" height="392.8" fill="#343434"/>
<rect x="735.0" y="67.0" width="461.0" height="355.4" fill="#242424"/>
<g clip-path="url(#cpPlot)"><g clip-path="url(#cpLocus)"><g filter="url(#fb)">
<rect x="747" y="72.7" width="72" height="3.6" fill="url(#r0)"/>
<rect x="740" y="75.7" width="109" height="3.6" fill="url(#r1)"/>
<rect x="737" y="78.7" width="139" height="3.6" fill="url(#r2)"/>
<rect x="735" y="81.7" width="168" height="3.6" fill="url(#r3)"/>
<rect x="733" y="84.7" width="196" height="3.6" fill="url(#r4)"/>
<rect x="733" y="87.7" width="222" height="3.6" fill="url(#r5)"/>
<rect x="733" y="90.7" width="248" height="3.6" fill="url(#r6)"/>
<rect x="733" y="93.7" width="274" height="3.6" fill="url(#r7)"/>
<rect x="733" y="96.7" width="300" height="3.6" fill="url(#r8)"/>
<rect x="733" y="99.7" width="326" height="3.6" fill="url(#r9)"/>
<rect x="733" y="102.7" width="352" height="3.6" fill="url(#r10)"/>
<rect x="733" y="105.7" width="378" height="3.6" fill="url(#r11)"/>
<rect x="733" y="108.7" width="404" height="3.6" fill="url(#r12)"/>
<rect x="733" y="111.7" width="430" height="3.6" fill="url(#r13)"/>
<rect x="733" y="114.7" width="456" height="3.6" fill="url(#r14)"/>
<rect x="733" y="117.7" width="473" height="3.6" fill="url(#r15)"/>
<rect x="733" y="120.7" width="473" height="3.6" fill="url(#r16)"/>
<rect x="733" y="123.7" width="473" height="3.6" fill="url(#r17)"/>
<rect x="734" y="126.7" width="472" height="3.6" fill="url(#r18)"/>
<rect x="735" y="129.7" width="471" height="3.6" fill="url(#r19)"/>
<rect x="735" y="132.7" width="471" height="3.6" fill="url(#r20)"/>
<rect x="736" y="135.7" width="470" height="3.6" fill="url(#r21)"/>
<rect x="737" y="138.7" width="467" height="3.6" fill="url(#r22)"/>
<rect x="738" y="141.7" width="463" height="3.6" fill="url(#r23)"/>
<rect x="738" y="144.7" width="460" height="3.6" fill="url(#r24)"/>
<rect x="739" y="147.7" width="456" height="3.6" fill="url(#r25)"/>
<rect x="740" y="150.7" width="452" height="3.6" fill="url(#r26)"/>
<rect x="741" y="153.7" width="448" height="3.6" fill="url(#r27)"/>
<rect x="743" y="156.7" width="443" height="3.6" fill="url(#r28)"/>
<rect x="744" y="159.7" width="439" height="3.6" fill="url(#r29)"/>
<rect x="745" y="162.7" width="436" height="3.6" fill="url(#r30)"/>
<rect x="746" y="165.7" width="432" height="3.6" fill="url(#r31)"/>
<rect x="747" y="168.7" width="428" height="3.6" fill="url(#r32)"/>
<rect x="748" y="171.7" width="424" height="3.6" fill="url(#r33)"/>
<rect x="749" y="174.7" width="420" height="3.6" fill="url(#r34)"/>
<rect x="750" y="177.7" width="416" height="3.6" fill="url(#r35)"/>
<rect x="751" y="180.7" width="412" height="3.6" fill="url(#r36)"/>
<rect x="753" y="183.7" width="407" height="3.6" fill="url(#r37)"/>
<rect x="754" y="186.7" width="403" height="3.6" fill="url(#r38)"/>
<rect x="755" y="189.7" width="399" height="3.6" fill="url(#r39)"/>
<rect x="757" y="192.7" width="394" height="3.6" fill="url(#r40)"/>
<rect x="758" y="195.7" width="390" height="3.6" fill="url(#r41)"/>
<rect x="759" y="198.7" width="387" height="3.6" fill="url(#r42)"/>
<rect x="761" y="201.7" width="382" height="3.6" fill="url(#r43)"/>
<rect x="762" y="204.7" width="378" height="3.6" fill="url(#r44)"/>
<rect x="764" y="207.7" width="373" height="3.6" fill="url(#r45)"/>
<rect x="765" y="210.7" width="369" height="3.6" fill="url(#r46)"/>
<rect x="766" y="213.7" width="365" height="3.6" fill="url(#r47)"/>
<rect x="768" y="216.7" width="360" height="3.6" fill="url(#r48)"/>
<rect x="769" y="219.7" width="356" height="3.6" fill="url(#r49)"/>
<rect x="770" y="222.7" width="352" height="3.6" fill="url(#r50)"/>
<rect x="772" y="225.7" width="347" height="3.6" fill="url(#r51)"/>
<rect x="774" y="228.7" width="342" height="3.6" fill="url(#r52)"/>
<rect x="775" y="231.7" width="339" height="3.6" fill="url(#r53)"/>
<rect x="777" y="234.7" width="334" height="3.6" fill="url(#r54)"/>
<rect x="779" y="237.7" width="329" height="3.6" fill="url(#r55)"/>
<rect x="780" y="240.7" width="325" height="3.6" fill="url(#r56)"/>
<rect x="782" y="243.7" width="320" height="3.6" fill="url(#r57)"/>
<rect x="784" y="246.7" width="315" height="3.6" fill="url(#r58)"/>
<rect x="785" y="249.7" width="311" height="3.6" fill="url(#r59)"/>
<rect x="787" y="252.7" width="306" height="3.6" fill="url(#r60)"/>
<rect x="789" y="255.7" width="301" height="3.6" fill="url(#r61)"/>
<rect x="790" y="258.7" width="297" height="3.6" fill="url(#r62)"/>
<rect x="792" y="261.7" width="292" height="3.6" fill="url(#r63)"/>
<rect x="794" y="264.7" width="288" height="3.6" fill="url(#r64)"/>
<rect x="796" y="267.7" width="283" height="3.6" fill="url(#r65)"/>
<rect x="798" y="270.7" width="278" height="3.6" fill="url(#r66)"/>
<rect x="799" y="273.7" width="274" height="3.6" fill="url(#r67)"/>
<rect x="801" y="276.7" width="269" height="3.6" fill="url(#r68)"/>
<rect x="803" y="279.7" width="264" height="3.6" fill="url(#r69)"/>
<rect x="805" y="282.7" width="259" height="3.6" fill="url(#r70)"/>
<rect x="807" y="285.7" width="254" height="3.6" fill="url(#r71)"/>
<rect x="809" y="288.7" width="249" height="3.6" fill="url(#r72)"/>
<rect x="811" y="291.7" width="244" height="3.6" fill="url(#r73)"/>
<rect x="812" y="294.7" width="240" height="3.6" fill="url(#r74)"/>
<rect x="814" y="297.7" width="236" height="3.6" fill="url(#r75)"/>
<rect x="816" y="300.7" width="231" height="3.6" fill="url(#r76)"/>
<rect x="818" y="303.7" width="226" height="3.6" fill="url(#r77)"/>
<rect x="820" y="306.7" width="221" height="3.6" fill="url(#r78)"/>
<rect x="822" y="309.7" width="216" height="3.6" fill="url(#r79)"/>
<rect x="825" y="312.7" width="210" height="3.6" fill="url(#r80)"/>
<rect x="827" y="315.7" width="205" height="3.6" fill="url(#r81)"/>
<rect x="829" y="318.7" width="200" height="3.6" fill="url(#r82)"/>
<rect x="831" y="321.7" width="195" height="3.6" fill="url(#r83)"/>
<rect x="833" y="324.7" width="190" height="3.6" fill="url(#r84)"/>
<rect x="835" y="327.7" width="185" height="3.6" fill="url(#r85)"/>
<rect x="837" y="330.7" width="180" height="3.6" fill="url(#r86)"/>
<rect x="840" y="333.7" width="175" height="3.6" fill="url(#r87)"/>
<rect x="842" y="336.7" width="170" height="3.6" fill="url(#r88)"/>
<rect x="844" y="339.7" width="165" height="3.6" fill="url(#r89)"/>
<rect x="847" y="342.7" width="159" height="3.6" fill="url(#r90)"/>
<rect x="849" y="345.7" width="154" height="3.6" fill="url(#r91)"/>
<rect x="852" y="348.7" width="148" height="3.6" fill="url(#r92)"/>
<rect x="854" y="351.7" width="143" height="3.6" fill="url(#r93)"/>
<rect x="857" y="354.7" width="137" height="3.6" fill="url(#r94)"/>
<rect x="859" y="357.7" width="132" height="3.6" fill="url(#r95)"/>
<rect x="862" y="360.7" width="126" height="3.6" fill="url(#r96)"/>
<rect x="865" y="363.7" width="120" height="3.6" fill="url(#r97)"/>
<rect x="868" y="366.7" width="115" height="3.6" fill="url(#r98)"/>
<rect x="871" y="369.7" width="109" height="3.6" fill="url(#r99)"/>
<rect x="874" y="372.7" width="103" height="3.6" fill="url(#r100)"/>
<rect x="877" y="375.7" width="97" height="3.6" fill="url(#r101)"/>
<rect x="881" y="378.7" width="90" height="3.6" fill="url(#r102)"/>
<rect x="884" y="381.7" width="84" height="3.6" fill="url(#r103)"/>
<rect x="888" y="384.7" width="77" height="3.6" fill="url(#r104)"/>
<rect x="891" y="387.7" width="71" height="3.6" fill="url(#r105)"/>
<rect x="895" y="390.7" width="64" height="3.6" fill="url(#r106)"/>
<rect x="898" y="393.7" width="58" height="3.6" fill="url(#r107)"/>
<rect x="902" y="396.7" width="51" height="3.6" fill="url(#r108)"/>
<rect x="906" y="399.7" width="45" height="3.6" fill="url(#r109)"/>
<rect x="909" y="402.7" width="39" height="3.6" fill="url(#r110)"/>
<rect x="913" y="405.7" width="32" height="3.6" fill="url(#r111)"/>
<rect x="916" y="408.7" width="26" height="3.6" fill="url(#r112)"/>
<rect x="920" y="411.7" width="19" height="3.6" fill="url(#r113)"/>
</g>
<path d="M923.5 408.8L919.7 405.8L914.8 401.6L908.6 396.4L900.5 389.7L890.7 381.5L878.7 370.7L864.4 356.1L845.4 333.0L822.8 301.4L798.4 262.1L774.9 219.7L756.6 178.9L744.1 144.5L737.6 119.0L736.1 101.2L738.5 89.0L744.4 81.2L752.7 77.3L762.6 75.8L773.4 75.4L784.3 75.6L795.7 76.1L808.0 77.0L821.3 78.2L836.0 79.7L852.3 81.4L870.3 83.4L890.2 85.7L912.1 88.2L936.0 91.0L961.7 93.9L988.9 97.1L1017.0 100.3L1044.1 103.5L1070.5 106.5L1094.4 109.2L1115.5 111.7L1133.5 113.7L1148.6 115.5L1161.3 116.9L1172.3 118.2L1181.6 119.3L1189.2 120.2L1195.0 120.8L1199.5 121.4L1202.9 121.7L1205.1 122.0L1207.0 122.2L1208.4 122.4L1209.9 122.6L1211.2 122.7L1211.9 122.8L1212.3 122.8L1212.5 122.9L935.6 408.3Q931.4 416.1 923.5 408.8ZM1080.2 113.2L830.8 89.8L869.4 328.9Z" fill="#000" fill-opacity=".38" fill-rule="evenodd"/>
</g></g>
<path d="M735.0 67.0H1196.0V422.4H735.0ZM735.0 422.4v4.5M735.0 423.3h-4.5M773.3 422.4v4.5M735.0 393.7h-4.5M811.6 422.4v4.5M735.0 364.1h-4.5M849.9 422.4v4.5M735.0 334.6h-4.5M888.2 422.4v4.5M735.0 305.0h-4.5M926.5 422.4v4.5M735.0 275.4h-4.5M964.8 422.4v4.5M735.0 245.8h-4.5M1003.1 422.4v4.5M735.0 216.3h-4.5M1041.4 422.4v4.5M735.0 186.7h-4.5M1079.7 422.4v4.5M735.0 157.1h-4.5M1118.0 422.4v4.5M735.0 127.6h-4.5M1156.3 422.4v4.5M735.0 98.0h-4.5" stroke="#a2a2a2" stroke-width="1.5" fill="none"/>
<text x="735.0" y="438.8" font-size="10.4" text-anchor="middle" fill="#f4f4f4">0</text>
<text x="729.6" y="427.5" font-size="10.4" text-anchor="end" fill="#f4f4f4">0</text>
<text x="773.3" y="438.8" font-size="10.4" text-anchor="middle" fill="#f4f4f4">0,05</text>
<text x="729.6" y="397.9" font-size="10.4" text-anchor="end" fill="#f4f4f4">0,05</text>
<text x="811.6" y="438.8" font-size="10.4" text-anchor="middle" fill="#f4f4f4">0,1</text>
<text x="729.6" y="368.3" font-size="10.4" text-anchor="end" fill="#f4f4f4">0,1</text>
<text x="849.9" y="438.8" font-size="10.4" text-anchor="middle" fill="#f4f4f4">0,15</text>
<text x="729.6" y="338.8" font-size="10.4" text-anchor="end" fill="#f4f4f4">0,15</text>
<text x="888.2" y="438.8" font-size="10.4" text-anchor="middle" fill="#f4f4f4">0,2</text>
<text x="729.6" y="309.2" font-size="10.4" text-anchor="end" fill="#f4f4f4">0,2</text>
<text x="926.5" y="438.8" font-size="10.4" text-anchor="middle" fill="#f4f4f4">0,25</text>
<text x="729.6" y="279.6" font-size="10.4" text-anchor="end" fill="#f4f4f4">0,25</text>
<text x="964.8" y="438.8" font-size="10.4" text-anchor="middle" fill="#f4f4f4">0,3</text>
<text x="729.6" y="250.0" font-size="10.4" text-anchor="end" fill="#f4f4f4">0,3</text>
<text x="1003.1" y="438.8" font-size="10.4" text-anchor="middle" fill="#f4f4f4">0,35</text>
<text x="729.6" y="220.5" font-size="10.4" text-anchor="end" fill="#f4f4f4">0,35</text>
<text x="1041.4" y="438.8" font-size="10.4" text-anchor="middle" fill="#f4f4f4">0,4</text>
<text x="729.6" y="190.9" font-size="10.4" text-anchor="end" fill="#f4f4f4">0,4</text>
<text x="1079.7" y="438.8" font-size="10.4" text-anchor="middle" fill="#f4f4f4">0,45</text>
<text x="729.6" y="161.3" font-size="10.4" text-anchor="end" fill="#f4f4f4">0,45</text>
<text x="1118.0" y="438.8" font-size="10.4" text-anchor="middle" fill="#f4f4f4">0,5</text>
<text x="729.6" y="131.8" font-size="10.4" text-anchor="end" fill="#f4f4f4">0,5</text>
<text x="1156.3" y="438.8" font-size="10.4" text-anchor="middle" fill="#f4f4f4">0,55</text>
<text x="729.6" y="102.2" font-size="10.4" text-anchor="end" fill="#f4f4f4">0,55</text>
<text x="953.0" y="64.0" font-size="10.6" text-anchor="middle" fill="#f4f4f4" textLength="61.0" lengthAdjust="spacingAndGlyphs">CIE 1976 u'v'</text>
<rect x="1075.2" y="107.8" width="10" height="10" rx=".8" fill="none" stroke="#f6f6f6" stroke-width="1.5"/>
<rect x="825.8" y="84.4" width="10" height="10" rx=".8" fill="none" stroke="#f6f6f6" stroke-width="1.5"/>
<rect x="864.4" y="323.5" width="10" height="10" rx=".8" fill="none" stroke="#f6f6f6" stroke-width="1.5"/>
<rect x="836.0" y="147.6" width="10" height="10" rx=".8" fill="none" stroke="#f6f6f6" stroke-width="1.5"/>
<rect x="963.6" y="221.9" width="10" height="10" rx=".8" fill="none" stroke="#f6f6f6" stroke-width="1.5"/>
<rect x="886.2" y="90.0" width="10" height="10" rx=".8" fill="none" stroke="#f6f6f6" stroke-width="1.5"/>
<rect x="881.5" y="140.0" width="10" height="10" fill="none" stroke="#0a0a0a" stroke-width="1.6"/>
<circle cx="884.8" cy="148.4" r="2.9" fill="none" stroke="#060606" stroke-width="1.35"/>
<circle cx="1094.2" cy="113.6" r="2.9" fill="none" stroke="#060606" stroke-width="1.35"/>
<circle cx="831.4" cy="89.4" r="2.9" fill="none" stroke="#060606" stroke-width="1.35"/>
<circle cx="867.3" cy="325.4" r="2.9" fill="none" stroke="#060606" stroke-width="1.35"/>
<circle cx="837.7" cy="156.3" r="2.9" fill="none" stroke="#060606" stroke-width="1.35"/>
<circle cx="968.5" cy="233.7" r="2.9" fill="none" stroke="#060606" stroke-width="1.35"/>
<circle cx="891.8" cy="93.8" r="2.9" fill="none" stroke="#060606" stroke-width="1.35"/>
<circle cx="884.4" cy="147.9" r="2.9" fill="none" stroke="#060606" stroke-width="1.35"/>
<rect x="1011.7" y="400" width="181.6" height="19.8" fill="#353535"/>
<text x="1013.2" y="415.0" font-size="15.6" text-anchor="start" fill="#fafafa" textLength="158.5" lengthAdjust="spacingAndGlyphs">Gamut Coverage:&#160; 99,9%</text>
</svg></section>
<section style="left:0;top:470px;width:230px;height:150px">
<h3 id="t5" style="-webkit-text-stroke:.2px #f4f4f4;left:9.8px;top:7.7px;font-size:21.3px"><span class="sx" style="transform:scaleX(1.01)">Current Reading</span></h3>
<p id="t6" style="-webkit-text-stroke:.2px #f4f4f4;left:10px;top:60.5px;font-size:19px"><span class="sx" style="transform:scaleX(.946)">x: 0,305</span></p>
<p id="t7" style="-webkit-text-stroke:.2px #f4f4f4;left:122.8px;top:60.5px;font-size:19px"><span class="sx" style="transform:scaleX(.95)">y: 0,322</span></p>
<p id="t8" style="-webkit-text-stroke:.2px #f4f4f4;left:10px;top:89.5px;font-size:19px"><span class="sx" style="transform:scaleX(.941)">fL: 20,89</span></p>
<p id="t9" style="-webkit-text-stroke:.2px #f4f4f4;left:10px;top:118.9px;font-size:19px"><span class="sx" style="transform:scaleX(.996)">cd/m²: 71,59</span></p>
</section>
<section style="left:232px;top:458px;width:214px;height:167px">
<svg width="214" height="167" viewBox="232 458 214 167">
<rect x="255.0" y="476.4" width="183.4" height="130.2" fill="#242424"/>
<path d="M251.5 476.8H438.4M251.5 509.4H438.4M251.5 542.0H438.4M251.5 574.6H438.4M251.5 607.2H438.4" stroke="#a2a2a2" stroke-width="1.3" fill="none"/>
<path d="M255.0 475.7V611.1M438.4 475.7V611.1" stroke="#a2a2a2" stroke-width="1.3" fill="none"/>
<rect x="273.8" y="542.0" width="47.8" height="33.8" fill="url(#vr)" stroke="#0a0a0a" stroke-width="1.3"/>
<rect x="323.2" y="536.8" width="47.4" height="5.2" fill="#00a000" stroke="#0a0a0a" stroke-width="1.3"/>
<rect x="371.9" y="487.8" width="48.2" height="54.2" fill="url(#vb)" stroke="#0a0a0a" stroke-width="1.3"/>
<text x="251.6" y="480.6" font-size="10.4" text-anchor="end" fill="#f4f4f4">10</text>
<text x="251.6" y="513.2" font-size="10.4" text-anchor="end" fill="#f4f4f4">5</text>
<text x="251.6" y="545.8" font-size="10.4" text-anchor="end" fill="#f4f4f4">0</text>
<text x="251.6" y="578.4" font-size="10.4" text-anchor="end" fill="#f4f4f4">-5</text>
<text x="251.6" y="611.0" font-size="10.4" text-anchor="end" fill="#f4f4f4">-10</text>
<text x="346.7" y="618.3" font-size="10.8" text-anchor="middle" fill="#f4f4f4" textLength="27.7" lengthAdjust="spacingAndGlyphs">100W</text>
<text x="336.6" y="472.1" font-size="10.8" text-anchor="middle" fill="#f4f4f4" textLength="59.8" lengthAdjust="spacingAndGlyphs">RGB Balance</text>
</svg></section>
<section style="left:455px;top:455px;width:256px;height:165px">
<svg width="256" height="165" viewBox="455 455 256 165">
<defs>
<clipPath id="cpXY"><rect x="459.6" y="469.6" width="245.9" height="143.4"/></clipPath>
<filter id="fb2" x="-5%" y="-5%" width="110%" height="110%"><feGaussianBlur stdDeviation="0 2.5"/></filter>
<linearGradient id="q0"><stop offset="0" stop-color="#82ffcd"/><stop offset=".048" stop-color="#89ffcc"/><stop offset=".095" stop-color="#90ffcc"/><stop offset=".143" stop-color="#96ffcc"/><stop offset=".19" stop-color="#9dffcb"/><stop offset=".238" stop-color="#a5ffcb"/><stop offset=".286" stop-color="#acffcb"/><stop offset=".333" stop-color="#b3ffca"/><stop offset=".381" stop-color="#baffca"/><stop offset=".429" stop-color="#c2ffca"/><stop offset=".476" stop-color="#c9ffc9"/><stop offset=".524" stop-color="#d1ffc9"/><stop offset=".571" stop-color="#d9ffc9"/><stop offset=".619" stop-color="#e1ffc8"/><stop offset=".667" stop-color="#e9ffc8"/><stop offset=".714" stop-color="#f1ffc8"/><stop offset=".762" stop-color="#f9ffc7"/><stop offset=".81" stop-color="#fffcc5"/><stop offset=".857" stop-color="#fff4be"/><stop offset=".905" stop-color="#ffedb8"/><stop offset=".952" stop-color="#ffe6b2"/><stop offset="1" stop-color="#ffdfac"/></linearGradient>
<linearGradient id="q1"><stop offset="0" stop-color="#85ffd0"/><stop offset=".048" stop-color="#8bffd0"/><stop offset=".095" stop-color="#92ffd0"/><stop offset=".143" stop-color="#99ffcf"/><stop offset=".19" stop-color="#a0ffcf"/><stop offset=".238" stop-color="#a8ffcf"/><stop offset=".286" stop-color="#afffce"/><stop offset=".333" stop-color="#b6ffce"/><stop offset=".381" stop-color="#beffce"/><stop offset=".429" stop-color="#c5ffcd"/><stop offset=".476" stop-color="#cdffcd"/><stop offset=".524" stop-color="#d5ffcd"/><stop offset=".571" stop-color="#ddffcd"/><stop offset=".619" stop-color="#e5ffcc"/><stop offset=".667" stop-color="#edffcc"/><stop offset=".714" stop-color="#f5ffcc"/><stop offset=".762" stop-color="#fdffcb"/><stop offset=".81" stop-color="#fff8c6"/><stop offset=".857" stop-color="#fff0bf"/><stop offset=".905" stop-color="#ffe9b9"/><stop offset=".952" stop-color="#ffe2b3"/><stop offset="1" stop-color="#ffdbad"/></linearGradient>
<linearGradient id="q2"><stop offset="0" stop-color="#87ffd4"/><stop offset=".048" stop-color="#8effd4"/><stop offset=".095" stop-color="#95ffd3"/><stop offset=".143" stop-color="#9cffd3"/><stop offset=".19" stop-color="#a3ffd3"/><stop offset=".238" stop-color="#abffd3"/><stop offset=".286" stop-color="#b2ffd2"/><stop offset=".333" stop-color="#baffd2"/><stop offset=".381" stop-color="#c1ffd2"/><stop offset=".429" stop-color="#c9ffd1"/><stop offset=".476" stop-color="#d1ffd1"/><stop offset=".524" stop-color="#d8ffd1"/><stop offset=".571" stop-color="#e0ffd0"/><stop offset=".619" stop-color="#e9ffd0"/><stop offset=".667" stop-color="#f1ffd0"/><stop offset=".714" stop-color="#f9ffd0"/><stop offset=".762" stop-color="#fffccd"/><stop offset=".81" stop-color="#fff4c6"/><stop offset=".857" stop-color="#ffedc0"/><stop offset=".905" stop-color="#ffe5b9"/><stop offset=".952" stop-color="#ffdeb3"/><stop offset="1" stop-color="#ffd7ae"/></linearGradient>
<linearGradient id="q3"><stop offset="0" stop-color="#8affd8"/><stop offset=".048" stop-color="#91ffd7"/><stop offset=".095" stop-color="#98ffd7"/><stop offset=".143" stop-color="#9fffd7"/><stop offset=".19" stop-color="#a6ffd7"/><stop offset=".238" stop-color="#aeffd6"/><stop offset=".286" stop-color="#b5ffd6"/><stop offset=".333" stop-color="#bdffd6"/><stop offset=".381" stop-color="#c5ffd6"/><stop offset=".429" stop-color="#ccffd5"/><stop offset=".476" stop-color="#d4ffd5"/><stop offset=".524" stop-color="#dcffd5"/><stop offset=".571" stop-color="#e4ffd5"/><stop offset=".619" stop-color="#edffd4"/><stop offset=".667" stop-color="#f5ffd4"/><stop offset=".714" stop-color="#fdffd4"/><stop offset=".762" stop-color="#fff8ce"/><stop offset=".81" stop-color="#fff0c7"/><stop offset=".857" stop-color="#ffe9c0"/><stop offset=".905" stop-color="#ffe1ba"/><stop offset=".952" stop-color="#ffdbb4"/><stop offset="1" stop-color="#ffd4ae"/></linearGradient>
<linearGradient id="q4"><stop offset="0" stop-color="#8dffdb"/><stop offset=".048" stop-color="#94ffdb"/><stop offset=".095" stop-color="#9bffdb"/><stop offset=".143" stop-color="#a2ffdb"/><stop offset=".19" stop-color="#aaffdb"/><stop offset=".238" stop-color="#b1ffda"/><stop offset=".286" stop-color="#b9ffda"/><stop offset=".333" stop-color="#c0ffda"/><stop offset=".381" stop-color="#c8ffda"/><stop offset=".429" stop-color="#d0ffd9"/><stop offset=".476" stop-color="#d8ffd9"/><stop offset=".524" stop-color="#e0ffd9"/><stop offset=".571" stop-color="#e8ffd9"/><stop offset=".619" stop-color="#f1ffd8"/><stop offset=".667" stop-color="#f9ffd8"/><stop offset=".714" stop-color="#fffcd6"/><stop offset=".762" stop-color="#fff4ce"/><stop offset=".81" stop-color="#ffecc7"/><stop offset=".857" stop-color="#ffe5c1"/><stop offset=".905" stop-color="#ffdebb"/><stop offset=".952" stop-color="#ffd7b5"/><stop offset="1" stop-color="#ffd0af"/></linearGradient>
<linearGradient id="q5"><stop offset="0" stop-color="#90ffdf"/><stop offset=".048" stop-color="#97ffdf"/><stop offset=".095" stop-color="#9effdf"/><stop offset=".143" stop-color="#a5ffdf"/><stop offset=".19" stop-color="#adffdf"/><stop offset=".238" stop-color="#b4ffde"/><stop offset=".286" stop-color="#bcffde"/><stop offset=".333" stop-color="#c4ffde"/><stop offset=".381" stop-color="#ccffde"/><stop offset=".429" stop-color="#d4ffde"/><stop offset=".476" stop-color="#dcffdd"/><stop offset=".524" stop-color="#e4ffdd"/><stop offset=".571" stop-color="#ecffdd"/><stop offset=".619" stop-color="#f5ffdd"/><stop offset=".667" stop-color="#fdffdc"/><stop offset=".714" stop-color="#fff8d6"/><stop offset=".762" stop-color="#fff0cf"/><stop offset=".81" stop-color="#ffe8c8"/><stop offset=".857" stop-color="#ffe1c2"/><stop offset=".905" stop-color="#ffdabb"/><stop offset=".952" stop-color="#ffd3b5"/><stop offset="1" stop-color="#ffcdb0"/></linearGradient>
<linearGradient id="q6"><stop offset="0" stop-color="#92ffe3"/><stop offset=".048" stop-color="#9affe3"/><stop offset=".095" stop-color="#a1ffe3"/><stop offset=".143" stop-color="#a8ffe3"/><stop offset=".19" stop-color="#b0ffe3"/><stop offset=".238" stop-color="#b8ffe2"/><stop offset=".286" stop-color="#c0ffe2"/><stop offset=".333" stop-color="#c7ffe2"/><stop offset=".381" stop-color="#cfffe2"/><stop offset=".429" stop-color="#d7ffe2"/><stop offset=".476" stop-color="#e0ffe2"/><stop offset=".524" stop-color="#e8ffe1"/><stop offset=".571" stop-color="#f1ffe1"/><stop offset=".619" stop-color="#f9ffe1"/><stop offset=".667" stop-color="#fffcde"/><stop offset=".714" stop-color="#fff4d7"/><stop offset=".762" stop-color="#ffecd0"/><stop offset=".81" stop-color="#ffe4c9"/><stop offset=".857" stop-color="#ffddc2"/><stop offset=".905" stop-color="#ffd6bc"/><stop offset=".952" stop-color="#ffd0b6"/><stop offset="1" stop-color="#ffcab1"/></linearGradient>
<linearGradient id="q7"><stop offset="0" stop-color="#95ffe7"/><stop offset=".048" stop-color="#9dffe7"/><stop offset=".095" stop-color="#a4ffe7"/><stop offset=".143" stop-color="#acffe7"/><stop offset=".19" stop-color="#b3ffe7"/><stop offset=".238" stop-color="#bbffe7"/><stop offset=".286" stop-color="#c3ffe7"/><stop offset=".333" stop-color="#cbffe6"/><stop offset=".381" stop-color="#d3ffe6"/><stop offset=".429" stop-color="#dbffe6"/><stop offset=".476" stop-color="#e4ffe6"/><stop offset=".524" stop-color="#ecffe6"/><stop offset=".571" stop-color="#f5ffe6"/><stop offset=".619" stop-color="#fdffe5"/><stop offset=".667" stop-color="#fff8df"/><stop offset=".714" stop-color="#fff0d7"/><stop offset=".762" stop-color="#ffe8d0"/><stop offset=".81" stop-color="#ffe1c9"/><stop offset=".857" stop-color="#ffd9c3"/><stop offset=".905" stop-color="#ffd3bd"/><stop offset=".952" stop-color="#ffccb7"/><stop offset="1" stop-color="#ffc6b1"/></linearGradient>
<linearGradient id="q8"><stop offset="0" stop-color="#98ffec"/><stop offset=".048" stop-color="#a0ffeb"/><stop offset=".095" stop-color="#a7ffeb"/><stop offset=".143" stop-color="#afffeb"/><stop offset=".19" stop-color="#b7ffeb"/><stop offset=".238" stop-color="#bfffeb"/><stop offset=".286" stop-color="#c7ffeb"/><stop offset=".333" stop-color="#cfffeb"/><stop offset=".381" stop-color="#d7ffeb"/><stop offset=".429" stop-color="#dfffea"/><stop offset=".476" stop-color="#e8ffea"/><stop offset=".524" stop-color="#f0ffea"/><stop offset=".571" stop-color="#f9ffea"/><stop offset=".619" stop-color="#fffce7"/><stop offset=".667" stop-color="#fff4df"/><stop offset=".714" stop-color="#ffecd8"/><stop offset=".762" stop-color="#ffe4d1"/><stop offset=".81" stop-color="#ffddca"/><stop offset=".857" stop-color="#ffd6c4"/><stop offset=".905" stop-color="#ffcfbd"/><stop offset=".952" stop-color="#ffc9b7"/><stop offset="1" stop-color="#ffc3b2"/></linearGradient>
<linearGradient id="q9"><stop offset="0" stop-color="#9bfff0"/><stop offset=".048" stop-color="#a3fff0"/><stop offset=".095" stop-color="#abfff0"/><stop offset=".143" stop-color="#b2fff0"/><stop offset=".19" stop-color="#baffef"/><stop offset=".238" stop-color="#c2ffef"/><stop offset=".286" stop-color="#caffef"/><stop offset=".333" stop-color="#d3ffef"/><stop offset=".381" stop-color="#dbffef"/><stop offset=".429" stop-color="#e3ffef"/><stop offset=".476" stop-color="#ecffef"/><stop offset=".524" stop-color="#f5ffef"/><stop offset=".571" stop-color="#fdffef"/><stop offset=".619" stop-color="#fff8e8"/><stop offset=".667" stop-color="#ffefe0"/><stop offset=".714" stop-color="#ffe8d8"/><stop offset=".762" stop-color="#ffe0d1"/><stop offset=".81" stop-color="#ffd9cb"/><stop offset=".857" stop-color="#ffd2c4"/><stop offset=".905" stop-color="#ffccbe"/><stop offset=".952" stop-color="#ffc6b8"/><stop offset="1" stop-color="#ffc0b3"/></linearGradient>
<linearGradient id="q10"><stop offset="0" stop-color="#9efff4"/><stop offset=".048" stop-color="#a6fff4"/><stop offset=".095" stop-color="#aefff4"/><stop offset=".143" stop-color="#b6fff4"/><stop offset=".19" stop-color="#befff4"/><stop offset=".238" stop-color="#c6fff4"/><stop offset=".286" stop-color="#cefff4"/><stop offset=".333" stop-color="#d6fff4"/><stop offset=".381" stop-color="#dffff4"/><stop offset=".429" stop-color="#e7fff4"/><stop offset=".476" stop-color="#f0fff3"/><stop offset=".524" stop-color="#f9fff3"/><stop offset=".571" stop-color="#fffcf1"/><stop offset=".619" stop-color="#fff3e8"/><stop offset=".667" stop-color="#ffebe0"/><stop offset=".714" stop-color="#ffe4d9"/><stop offset=".762" stop-color="#ffdcd2"/><stop offset=".81" stop-color="#ffd5cb"/><stop offset=".857" stop-color="#ffcfc5"/><stop offset=".905" stop-color="#ffc8bf"/><stop offset=".952" stop-color="#ffc2b9"/><stop offset="1" stop-color="#ffbcb3"/></linearGradient>
<linearGradient id="q11"><stop offset="0" stop-color="#a2fff9"/><stop offset=".048" stop-color="#a9fff9"/><stop offset=".095" stop-color="#b1fff8"/><stop offset=".143" stop-color="#b9fff8"/><stop offset=".19" stop-color="#c1fff8"/><stop offset=".238" stop-color="#cafff8"/><stop offset=".286" stop-color="#d2fff8"/><stop offset=".333" stop-color="#dafff8"/><stop offset=".381" stop-color="#e3fff8"/><stop offset=".429" stop-color="#ecfff8"/><stop offset=".476" stop-color="#f5fff8"/><stop offset=".524" stop-color="#fefff8"/><stop offset=".571" stop-color="#fff8f1"/><stop offset=".619" stop-color="#ffefe9"/><stop offset=".667" stop-color="#ffe7e1"/><stop offset=".714" stop-color="#ffe0da"/><stop offset=".762" stop-color="#ffd8d2"/><stop offset=".81" stop-color="#ffd2cc"/><stop offset=".857" stop-color="#ffcbc5"/><stop offset=".905" stop-color="#ffc5bf"/><stop offset=".952" stop-color="#ffbfb9"/><stop offset="1" stop-color="#ffb9b4"/></linearGradient>
<linearGradient id="q12"><stop offset="0" stop-color="#a5fffd"/><stop offset=".048" stop-color="#adfffd"/><stop offset=".095" stop-color="#b5fffd"/><stop offset=".143" stop-color="#bdfffd"/><stop offset=".19" stop-color="#c5fffd"/><stop offset=".238" stop-color="#cdfffd"/><stop offset=".286" stop-color="#d6fffd"/><stop offset=".333" stop-color="#defffd"/><stop offset=".381" stop-color="#e7fffd"/><stop offset=".429" stop-color="#f0fffd"/><stop offset=".476" stop-color="#f9fffd"/><stop offset=".524" stop-color="#fffcfa"/><stop offset=".571" stop-color="#fff3f1"/><stop offset=".619" stop-color="#ffebe9"/><stop offset=".667" stop-color="#ffe3e1"/><stop offset=".714" stop-color="#ffdcda"/><stop offset=".762" stop-color="#ffd5d3"/><stop offset=".81" stop-color="#ffcecc"/><stop offset=".857" stop-color="#ffc7c6"/><stop offset=".905" stop-color="#ffc1c0"/><stop offset=".952" stop-color="#ffbbba"/><stop offset="1" stop-color="#ffb6b5"/></linearGradient>
<linearGradient id="q13"><stop offset="0" stop-color="#a7fcff"/><stop offset=".048" stop-color="#aefcff"/><stop offset=".095" stop-color="#b6fcff"/><stop offset=".143" stop-color="#befcff"/><stop offset=".19" stop-color="#c7fcff"/><stop offset=".238" stop-color="#cffcff"/><stop offset=".286" stop-color="#d7fcff"/><stop offset=".333" stop-color="#e0fcff"/><stop offset=".381" stop-color="#e9fcff"/><stop offset=".429" stop-color="#f2fcff"/><stop offset=".476" stop-color="#fbfcff"/><stop offset=".524" stop-color="#fff7fa"/><stop offset=".571" stop-color="#ffeff2"/><stop offset=".619" stop-color="#ffe7ea"/><stop offset=".667" stop-color="#ffdfe2"/><stop offset=".714" stop-color="#ffd8db"/><stop offset=".762" stop-color="#ffd1d4"/><stop offset=".81" stop-color="#ffcacd"/><stop offset=".857" stop-color="#ffc4c7"/><stop offset=".905" stop-color="#ffbec1"/><stop offset=".952" stop-color="#ffb8bb"/><stop offset="1" stop-color="#ffb3b5"/></linearGradient>
<linearGradient id="q14"><stop offset="0" stop-color="#a7f8ff"/><stop offset=".048" stop-color="#aff8ff"/><stop offset=".095" stop-color="#b7f8ff"/><stop offset=".143" stop-color="#bff8ff"/><stop offset=".19" stop-color="#c7f8ff"/><stop offset=".238" stop-color="#cff8ff"/><stop offset=".286" stop-color="#d7f7ff"/><stop offset=".333" stop-color="#e0f7ff"/><stop offset=".381" stop-color="#e9f7ff"/><stop offset=".429" stop-color="#f1f7ff"/><stop offset=".476" stop-color="#faf7ff"/><stop offset=".524" stop-color="#fff3fb"/><stop offset=".571" stop-color="#ffebf2"/><stop offset=".619" stop-color="#ffe3ea"/><stop offset=".667" stop-color="#ffdbe2"/><stop offset=".714" stop-color="#ffd4db"/><stop offset=".762" stop-color="#ffcdd4"/><stop offset=".81" stop-color="#ffc7ce"/><stop offset=".857" stop-color="#ffc1c7"/><stop offset=".905" stop-color="#ffbbc1"/><stop offset=".952" stop-color="#ffb5bb"/><stop offset="1" stop-color="#ffb0b6"/></linearGradient>
<linearGradient id="q15"><stop offset="0" stop-color="#a7f3ff"/><stop offset=".048" stop-color="#aff3ff"/><stop offset=".095" stop-color="#b7f3ff"/><stop offset=".143" stop-color="#bff3ff"/><stop offset=".19" stop-color="#c7f3ff"/><stop offset=".238" stop-color="#cff3ff"/><stop offset=".286" stop-color="#d7f3ff"/><stop offset=".333" stop-color="#e0f3ff"/><stop offset=".381" stop-color="#e8f3ff"/><stop offset=".429" stop-color="#f1f2ff"/><stop offset=".476" stop-color="#faf2ff"/><stop offset=".524" stop-color="#ffeffb"/><stop offset=".571" stop-color="#ffe6f3"/><stop offset=".619" stop-color="#ffdfeb"/><stop offset=".667" stop-color="#ffd7e3"/><stop offset=".714" stop-color="#ffd0dc"/><stop offset=".762" stop-color="#ffcad5"/><stop offset=".81" stop-color="#ffc3ce"/><stop offset=".857" stop-color="#ffbdc8"/><stop offset=".905" stop-color="#ffb7c2"/><stop offset=".952" stop-color="#ffb2bc"/><stop offset="1" stop-color="#ffacb6"/></linearGradient>
<linearGradient id="q16"><stop offset="0" stop-color="#a7efff"/><stop offset=".048" stop-color="#afefff"/><stop offset=".095" stop-color="#b7efff"/><stop offset=".143" stop-color="#bfefff"/><stop offset=".19" stop-color="#c7eeff"/><stop offset=".238" stop-color="#cfeeff"/><stop offset=".286" stop-color="#d7eeff"/><stop offset=".333" stop-color="#e0eeff"/><stop offset=".381" stop-color="#e8eeff"/><stop offset=".429" stop-color="#f1eeff"/><stop offset=".476" stop-color="#faeeff"/><stop offset=".524" stop-color="#ffeafc"/><stop offset=".571" stop-color="#ffe2f3"/><stop offset=".619" stop-color="#ffdbeb"/><stop offset=".667" stop-color="#ffd3e3"/><stop offset=".714" stop-color="#ffccdc"/><stop offset=".762" stop-color="#ffc6d5"/><stop offset=".81" stop-color="#ffc0cf"/><stop offset=".857" stop-color="#ffbac8"/><stop offset=".905" stop-color="#ffb4c2"/><stop offset=".952" stop-color="#ffafbd"/><stop offset="1" stop-color="#ffa9b7"/></linearGradient>
<linearGradient id="q17"><stop offset="0" stop-color="#a8ebff"/><stop offset=".048" stop-color="#afeaff"/><stop offset=".095" stop-color="#b7eaff"/><stop offset=".143" stop-color="#bfeaff"/><stop offset=".19" stop-color="#c7eaff"/><stop offset=".238" stop-color="#cfeaff"/><stop offset=".286" stop-color="#d7eaff"/><stop offset=".333" stop-color="#e0eaff"/><stop offset=".381" stop-color="#e8e9ff"/><stop offset=".429" stop-color="#f1e9ff"/><stop offset=".476" stop-color="#f9e9ff"/><stop offset=".524" stop-color="#ffe6fc"/><stop offset=".571" stop-color="#ffdef3"/><stop offset=".619" stop-color="#ffd7eb"/><stop offset=".667" stop-color="#ffd0e4"/><stop offset=".714" stop-color="#ffc9dd"/><stop offset=".762" stop-color="#ffc2d6"/><stop offset=".81" stop-color="#ffbccf"/><stop offset=".857" stop-color="#ffb6c9"/><stop offset=".905" stop-color="#ffb1c3"/><stop offset=".952" stop-color="#ffabbd"/><stop offset="1" stop-color="#ffa6b8"/></linearGradient>
<linearGradient id="q18"><stop offset="0" stop-color="#a8e6ff"/><stop offset=".048" stop-color="#b0e6ff"/><stop offset=".095" stop-color="#b7e6ff"/><stop offset=".143" stop-color="#bfe6ff"/><stop offset=".19" stop-color="#c7e6ff"/><stop offset=".238" stop-color="#cfe5ff"/><stop offset=".286" stop-color="#d7e5ff"/><stop offset=".333" stop-color="#e0e5ff"/><stop offset=".381" stop-color="#e8e5ff"/><stop offset=".429" stop-color="#f0e5ff"/><stop offset=".476" stop-color="#f9e4ff"/><stop offset=".524" stop-color="#ffe2fc"/><stop offset=".571" stop-color="#ffdaf4"/><stop offset=".619" stop-color="#ffd3ec"/><stop offset=".667" stop-color="#ffcce4"/><stop offset=".714" stop-color="#ffc5dd"/><stop offset=".762" stop-color="#ffbfd6"/><stop offset=".81" stop-color="#ffb9d0"/><stop offset=".857" stop-color="#ffb3c9"/><stop offset=".905" stop-color="#ffaec4"/><stop offset=".952" stop-color="#ffa8be"/><stop offset="1" stop-color="#ffa3b8"/></linearGradient>
<linearGradient id="q19"><stop offset="0" stop-color="#a8e2ff"/><stop offset=".048" stop-color="#b0e2ff"/><stop offset=".095" stop-color="#b8e2ff"/><stop offset=".143" stop-color="#bfe2ff"/><stop offset=".19" stop-color="#c7e1ff"/><stop offset=".238" stop-color="#cfe1ff"/><stop offset=".286" stop-color="#d7e1ff"/><stop offset=".333" stop-color="#dfe1ff"/><stop offset=".381" stop-color="#e8e0ff"/><stop offset=".429" stop-color="#f0e0ff"/><stop offset=".476" stop-color="#f9e0ff"/><stop offset=".524" stop-color="#ffdefd"/><stop offset=".571" stop-color="#ffd6f4"/><stop offset=".619" stop-color="#ffcfec"/><stop offset=".667" stop-color="#ffc8e5"/><stop offset=".714" stop-color="#ffc2de"/><stop offset=".762" stop-color="#ffbbd7"/><stop offset=".81" stop-color="#ffb5d0"/><stop offset=".857" stop-color="#ffb0ca"/><stop offset=".905" stop-color="#ffaac4"/><stop offset=".952" stop-color="#ffa5be"/><stop offset="1" stop-color="#ffa0b9"/></linearGradient>
<linearGradient id="q20"><stop offset="0" stop-color="#a9deff"/><stop offset=".048" stop-color="#b0deff"/><stop offset=".095" stop-color="#b8deff"/><stop offset=".143" stop-color="#bfddff"/><stop offset=".19" stop-color="#c7ddff"/><stop offset=".238" stop-color="#cfddff"/><stop offset=".286" stop-color="#d7ddff"/><stop offset=".333" stop-color="#dfdcff"/><stop offset=".381" stop-color="#e8dcff"/><stop offset=".429" stop-color="#f0dcff"/><stop offset=".476" stop-color="#f8dbff"/><stop offset=".524" stop-color="#ffd9fd"/><stop offset=".571" stop-color="#ffd2f5"/><stop offset=".619" stop-color="#ffcbed"/><stop offset=".667" stop-color="#ffc4e5"/><stop offset=".714" stop-color="#ffbede"/><stop offset=".762" stop-color="#ffb8d7"/><stop offset=".81" stop-color="#ffb2d1"/><stop offset=".857" stop-color="#ffadcb"/><stop offset=".905" stop-color="#ffa7c5"/><stop offset=".952" stop-color="#ffa2bf"/><stop offset="1" stop-color="#ff9dba"/></linearGradient>
<linearGradient id="q21"><stop offset="0" stop-color="#a9daff"/><stop offset=".048" stop-color="#b0daff"/><stop offset=".095" stop-color="#b8d9ff"/><stop offset=".143" stop-color="#c0d9ff"/><stop offset=".19" stop-color="#c7d9ff"/><stop offset=".238" stop-color="#cfd9ff"/><stop offset=".286" stop-color="#d7d8ff"/><stop offset=".333" stop-color="#dfd8ff"/><stop offset=".381" stop-color="#e7d8ff"/><stop offset=".429" stop-color="#f0d7ff"/><stop offset=".476" stop-color="#f8d7ff"/><stop offset=".524" stop-color="#ffd5fd"/><stop offset=".571" stop-color="#ffcef5"/><stop offset=".619" stop-color="#ffc7ed"/><stop offset=".667" stop-color="#ffc1e6"/><stop offset=".714" stop-color="#ffbadf"/><stop offset=".762" stop-color="#ffb4d8"/><stop offset=".81" stop-color="#ffafd1"/><stop offset=".857" stop-color="#ffa9cb"/><stop offset=".905" stop-color="#ffa4c5"/><stop offset=".952" stop-color="#ff9fc0"/><stop offset="1" stop-color="#ff9aba"/></linearGradient>
<linearGradient id="q22"><stop offset="0" stop-color="#a9d6ff"/><stop offset=".048" stop-color="#b1d6ff"/><stop offset=".095" stop-color="#b8d5ff"/><stop offset=".143" stop-color="#c0d5ff"/><stop offset=".19" stop-color="#c7d5ff"/><stop offset=".238" stop-color="#cfd4ff"/><stop offset=".286" stop-color="#d7d4ff"/><stop offset=".333" stop-color="#dfd4ff"/><stop offset=".381" stop-color="#e7d3ff"/><stop offset=".429" stop-color="#f0d3ff"/><stop offset=".476" stop-color="#f8d3ff"/><stop offset=".524" stop-color="#ffd1fe"/><stop offset=".571" stop-color="#ffcaf5"/><stop offset=".619" stop-color="#ffc4ee"/><stop offset=".667" stop-color="#ffbde6"/><stop offset=".714" stop-color="#ffb7df"/><stop offset=".762" stop-color="#ffb1d8"/><stop offset=".81" stop-color="#ffacd2"/><stop offset=".857" stop-color="#ffa6cc"/><stop offset=".905" stop-color="#ffa1c6"/><stop offset=".952" stop-color="#ff9cc0"/><stop offset="1" stop-color="#ff98bb"/></linearGradient>
<linearGradient id="q23"><stop offset="0" stop-color="#a9d2ff"/><stop offset=".048" stop-color="#b1d2ff"/><stop offset=".095" stop-color="#b8d1ff"/><stop offset=".143" stop-color="#c0d1ff"/><stop offset=".19" stop-color="#c7d1ff"/><stop offset=".238" stop-color="#cfd0ff"/><stop offset=".286" stop-color="#d7d0ff"/><stop offset=".333" stop-color="#dfd0ff"/><stop offset=".381" stop-color="#e7cfff"/><stop offset=".429" stop-color="#efcfff"/><stop offset=".476" stop-color="#f8cfff"/><stop offset=".524" stop-color="#ffcdfe"/><stop offset=".571" stop-color="#ffc6f6"/><stop offset=".619" stop-color="#ffc0ee"/><stop offset=".667" stop-color="#ffbae7"/><stop offset=".714" stop-color="#ffb3e0"/><stop offset=".762" stop-color="#ffaed9"/><stop offset=".81" stop-color="#ffa8d2"/><stop offset=".857" stop-color="#ffa3cc"/><stop offset=".905" stop-color="#ff9ec6"/><stop offset=".952" stop-color="#ff99c1"/><stop offset="1" stop-color="#ff95bb"/></linearGradient>
<linearGradient id="q24"><stop offset="0" stop-color="#aaceff"/><stop offset=".048" stop-color="#b1ceff"/><stop offset=".095" stop-color="#b8cdff"/><stop offset=".143" stop-color="#c0cdff"/><stop offset=".19" stop-color="#c8cdff"/><stop offset=".238" stop-color="#cfccff"/><stop offset=".286" stop-color="#d7ccff"/><stop offset=".333" stop-color="#dfccff"/><stop offset=".381" stop-color="#e7cbff"/><stop offset=".429" stop-color="#efcbff"/><stop offset=".476" stop-color="#f7caff"/><stop offset=".524" stop-color="#ffc9fe"/><stop offset=".571" stop-color="#ffc3f6"/><stop offset=".619" stop-color="#ffbcee"/><stop offset=".667" stop-color="#ffb6e7"/><stop offset=".714" stop-color="#ffb0e0"/><stop offset=".762" stop-color="#ffaad9"/><stop offset=".81" stop-color="#ffa5d3"/><stop offset=".857" stop-color="#ffa0cd"/><stop offset=".905" stop-color="#ff9bc7"/><stop offset=".952" stop-color="#ff96c1"/><stop offset="1" stop-color="#ff92bc"/></linearGradient>
<linearGradient id="q25"><stop offset="0" stop-color="#aacaff"/><stop offset=".048" stop-color="#b1caff"/><stop offset=".095" stop-color="#b9c9ff"/><stop offset=".143" stop-color="#c0c9ff"/><stop offset=".19" stop-color="#c8c9ff"/><stop offset=".238" stop-color="#cfc8ff"/><stop offset=".286" stop-color="#d7c8ff"/><stop offset=".333" stop-color="#dfc7ff"/><stop offset=".381" stop-color="#e7c7ff"/><stop offset=".429" stop-color="#efc7ff"/><stop offset=".476" stop-color="#f7c6ff"/><stop offset=".524" stop-color="#ffc6ff"/><stop offset=".571" stop-color="#ffbff7"/><stop offset=".619" stop-color="#ffb9ef"/><stop offset=".667" stop-color="#ffb2e7"/><stop offset=".714" stop-color="#ffade0"/><stop offset=".762" stop-color="#ffa7da"/><stop offset=".81" stop-color="#ffa2d3"/><stop offset=".857" stop-color="#ff9dcd"/><stop offset=".905" stop-color="#ff98c7"/><stop offset=".952" stop-color="#ff93c2"/><stop offset="1" stop-color="#ff8fbc"/></linearGradient>
</defs>
<g clip-path="url(#cpXY)"><g filter="url(#fb2)">
<rect x="453.6" y="463.3" width="257.9" height="6.6" fill="url(#q0)"/>
<rect x="453.6" y="469.3" width="257.9" height="6.6" fill="url(#q1)"/>
<rect x="453.6" y="475.3" width="257.9" height="6.6" fill="url(#q2)"/>
<rect x="453.6" y="481.3" width="257.9" height="6.6" fill="url(#q3)"/>
<rect x="453.6" y="487.3" width="257.9" height="6.6" fill="url(#q4)"/>
<rect x="453.6" y="493.3" width="257.9" height="6.6" fill="url(#q5)"/>
<rect x="453.6" y="499.3" width="257.9" height="6.6" fill="url(#q6)"/>
<rect x="453.6" y="505.3" width="257.9" height="6.6" fill="url(#q7)"/>
<rect x="453.6" y="511.3" width="257.9" height="6.6" fill="url(#q8)"/>
<rect x="453.6" y="517.3" width="257.9" height="6.6" fill="url(#q9)"/>
<rect x="453.6" y="523.3" width="257.9" height="6.6" fill="url(#q10)"/>
<rect x="453.6" y="529.3" width="257.9" height="6.6" fill="url(#q11)"/>
<rect x="453.6" y="535.3" width="257.9" height="6.6" fill="url(#q12)"/>
<rect x="453.6" y="541.3" width="257.9" height="6.6" fill="url(#q13)"/>
<rect x="453.6" y="547.3" width="257.9" height="6.6" fill="url(#q14)"/>
<rect x="453.6" y="553.3" width="257.9" height="6.6" fill="url(#q15)"/>
<rect x="453.6" y="559.3" width="257.9" height="6.6" fill="url(#q16)"/>
<rect x="453.6" y="565.3" width="257.9" height="6.6" fill="url(#q17)"/>
<rect x="453.6" y="571.3" width="257.9" height="6.6" fill="url(#q18)"/>
<rect x="453.6" y="577.3" width="257.9" height="6.6" fill="url(#q19)"/>
<rect x="453.6" y="583.3" width="257.9" height="6.6" fill="url(#q20)"/>
<rect x="453.6" y="589.3" width="257.9" height="6.6" fill="url(#q21)"/>
<rect x="453.6" y="595.3" width="257.9" height="6.6" fill="url(#q22)"/>
<rect x="453.6" y="601.3" width="257.9" height="6.6" fill="url(#q23)"/>
<rect x="453.6" y="607.3" width="257.9" height="6.6" fill="url(#q24)"/>
<rect x="453.6" y="613.3" width="257.9" height="6.6" fill="url(#q25)"/>
</g></g>
<rect x="577.2" y="536.2" width="9.6" height="9.6" fill="none" stroke="#111" stroke-width="1.7"/>
<circle cx="543.9" cy="561.4" r="2.9" fill="none" stroke="#333" stroke-width="1"/>
<circle cx="543.9" cy="564.9" r="2.9" fill="none" stroke="#333" stroke-width="1"/>
<text x="582.5" y="466.3" font-size="10.8" text-anchor="middle" fill="#f4f4f4" textLength="54.5" lengthAdjust="spacingAndGlyphs">CIE 1931 xy</text>
</svg></section>
<section style="left:0;top:0;width:0;height:0">
<table id="tbl"><colgroup>
<col style="width:10.6px">
<col style="width:55.2px">
<col style="width:50.4px">
<col style="width:50.4px">
<col style="width:50.4px">
<col style="width:43.4px">
<col style="width:51.0px">
<col style="width:51.2px">
<col style="width:50.4px">
<col style="width:46.8px">
</colgroup><thead><tr><th></th><th></th><th><span>White</span></th><th><span>Red</span></th><th><span>Green</span></th><th><span>Blue</span></th><th><span>Cyan</span></th><th><span>Magenta</span></th><th><span>Yellow</span></th><th><span>100W</span></th></tr></thead><tbody>
<tr><td></td><td class="l" style="padding-left:2.8px"><span>x: CIE31</span></td><td><span>0,3049</span></td><td><span>0,6522</span></td><td><span>0,3014</span></td><td><span>0,1491</span></td><td><span>0,2148</span></td><td><span>0,3140</span></td><td><span>0,4236</span></td><td><span>0,3050</span></td></tr>
<tr><td></td><td class="l" style="padding-left:2.8px"><span>y: CIE31</span></td><td><span>0,3205</span></td><td><span>0,3223</span></td><td><span>0,5989</span></td><td><span>0,0626</span></td><td><span>0,3200</span></td><td><span>0,1457</span></td><td><span>0,5104</span></td><td><span>0,3220</span></td></tr>
<tr><td></td><td class="l" style="padding-left:2.8px"><span>Y</span></td><td><span>37,3663</span></td><td><span>7,4102</span></td><td><span>26,5815</span></td><td><span>2,9777</span></td><td><span>29,6194</span></td><td><span>10,4044</span></td><td><span>34,4656</span></td><td><span>71,5889</span></td></tr>
<tr><td></td><td class="l" style="padding-left:2.8px"><span>Target Y</span></td><td><span>37,9080</span></td><td><span>8,0614</span></td><td><span>27,1102</span></td><td><span>2,7364</span></td><td><span>29,8466</span></td><td><span>10,7978</span></td><td><span>35,1716</span></td><td><span>71,5889</span></td></tr>
<tr><td></td><td class="l" style="padding-left:2.8px"><span>ΔE 2000</span></td><td><span>3,5581</span></td><td><span>1,5868</span></td><td><span>0,5031</span></td><td><span>1,1826</span></td><td><span>2,0188</span></td><td><span>1,2744</span></td><td><span>0,9347</span></td><td><span>3,8758</span></td></tr>
<tr><td></td><td class="l" style="padding-left:2.8px"><span>dEITP</span></td><td><span>4,2584</span></td><td><span>10,0131</span></td><td><span>1,4125</span></td><td><span>4,2693</span></td><td><span>5,8852</span></td><td><span>4,2875</span></td><td><span>3,9537</span></td><td><span>4,2578</span></td></tr>
</tbody></table>
</section>
</body></html>
